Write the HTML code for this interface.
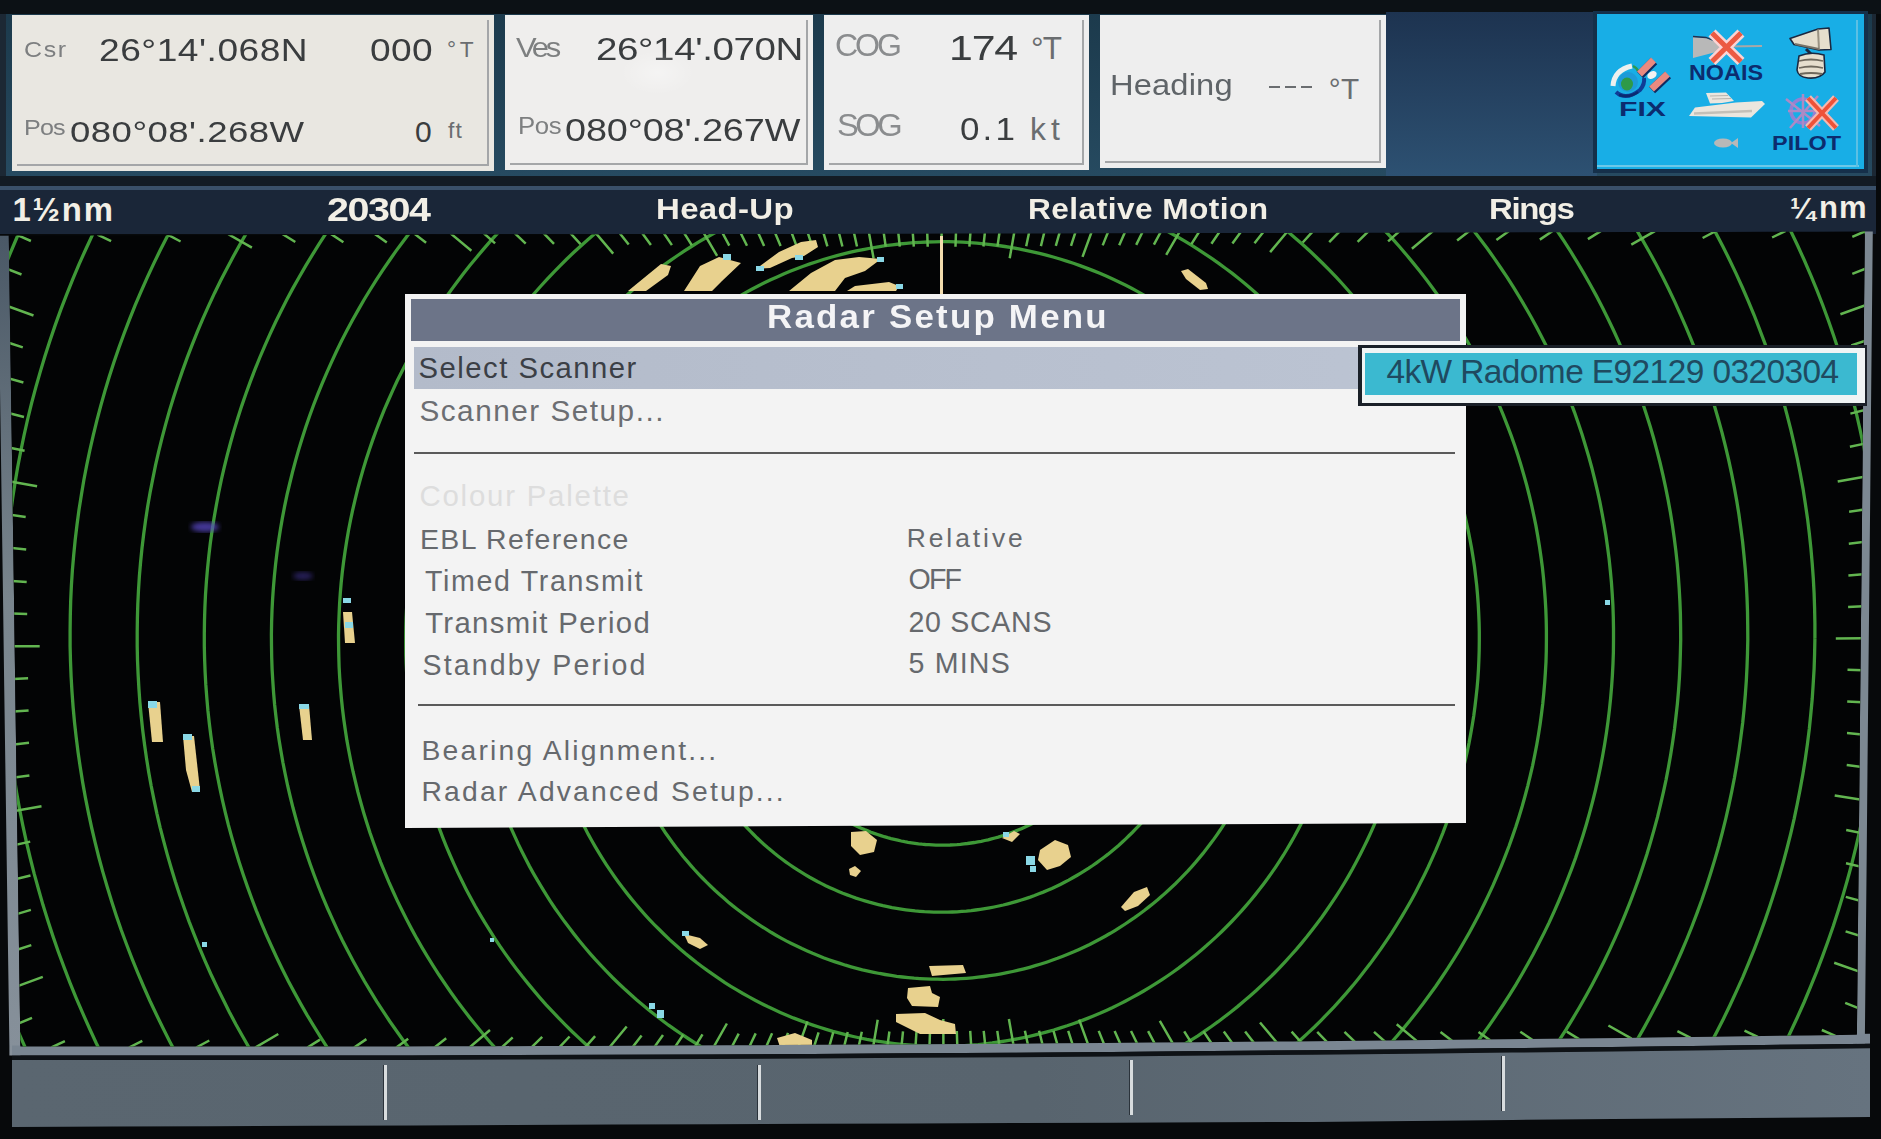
<!DOCTYPE html>
<html><head><meta charset="utf-8"><style>
html,body{margin:0;padding:0;width:1881px;height:1139px;overflow:hidden;background:#07090b;}
.abs{position:absolute;}
.t{position:absolute;white-space:pre;line-height:1;font-family:"Liberation Sans",sans-serif;}
.box{position:absolute;}
.box i{position:absolute;left:5px;top:5px;right:5px;bottom:5px;border-right:2px solid #a4a6a8;border-bottom:2px solid #a4a6a8;}
</style></head><body>
<div class="abs" style="left:0;top:0;width:1876px;height:186px;background:#1c2834"></div>
<div class="abs" style="left:0;top:0;width:1881px;height:14px;background:#0c1115"></div>
<div class="abs" style="left:6px;top:14px;width:1866px;height:162px;background:linear-gradient(#1c3a4c,#264a60)"></div>
<div class="abs" style="left:1386px;top:12px;width:211px;height:164px;background:linear-gradient(#1d3350,#2d5172)"></div>
<div class="abs" style="left:0;top:176px;width:1876px;height:10px;background:#131b23"></div>
<div class="box" style="left:12px;top:15px;width:482px;height:156px;background:#e9e7e1"><i></i></div>
<div class="box" style="left:505px;top:15px;width:308px;height:155px;background:#efeeed"><i></i></div>
<div class="box" style="left:824px;top:15px;width:265px;height:155px;background:#eeeeee"><i></i></div>
<div class="box" style="left:1100px;top:15px;width:286px;height:153px;background:#eeeeee"><i></i></div>
<div class="abs" style="left:1593px;top:11px;width:275px;height:162px;background:#15304a"></div>
<div class="abs" style="left:1597px;top:14px;width:267px;height:155px;background:#18aee6"></div>
<div class="abs" style="left:1597px;top:165px;width:262px;height:2px;background:#6cc8e8"></div><div class="abs" style="left:1856px;top:20px;width:2px;height:147px;background:#5cc0e4"></div>
<div class="abs" style="left:0;top:186px;width:1876px;height:48px;background:#1a2638"></div>
<div class="abs" style="left:0;top:186px;width:1876px;height:4px;background:#3a5068"></div>
<div class="abs" style="left:0;top:234px;width:1881px;height:905px;background:#07090b"></div>
<svg class="abs" style="left:0;top:0" width="1881" height="1139" viewBox="0 0 1881 1139">
<defs><linearGradient id="lbg" x1="0" x2="0" y1="0" y2="1"><stop offset="0" stop-color="#4a5866"/><stop offset="0.45" stop-color="#7a868e"/><stop offset="1" stop-color="#86909a"/></linearGradient></defs><polygon points="-2.2,235.7 -0.9,325.8 0.4,415.9 1.7,506.0 3.0,596.1 4.2,686.1 5.5,776.2 6.8,866.3 8.1,956.4 9.4,1046.5 9.4,1055.5 20.4,1055.5 20.4,1046.5 19.1,956.4 17.8,866.3 16.5,776.2 15.2,686.1 14.0,596.1 12.7,506.0 11.4,415.9 10.1,325.8 8.8,235.7" fill="url(#lbg)"/><polygon points="1864.8,231.6 1863.9,320.8 1863.0,410.1 1862.2,499.3 1861.3,588.6 1860.4,677.8 1859.5,767.1 1858.7,856.3 1857.8,945.6 1856.9,1034.8 1856.9,1043.8 1864.9,1043.8 1864.9,1034.8 1865.8,945.6 1866.7,856.3 1867.5,767.1 1868.4,677.8 1869.3,588.6 1870.2,499.3 1871.0,410.1 1871.9,320.8 1872.8,231.6" fill="#7c8892"/>
<defs><linearGradient id="bb" x1="0" x2="1" y1="0" y2="0"><stop offset="0" stop-color="#5a6670"/><stop offset="0.55" stop-color="#58646e"/><stop offset="1" stop-color="#66737f"/></linearGradient></defs><polygon points="12,1045.6 112,1045.6 212,1045.6 312,1045.5 412,1045.4 512,1045.1 612,1044.8 712,1044.4 812,1043.9 912,1043.3 1012,1042.7 1112,1041.9 1212,1041.1 1312,1040.2 1412,1039.2 1512,1038.1 1612,1037.0 1712,1035.7 1812,1034.4 1870,1033.7 1870,1043.7 1812,1044.4 1712,1045.7 1612,1047.0 1512,1048.1 1412,1049.2 1312,1050.2 1212,1051.1 1112,1051.9 1012,1052.7 912,1053.3 812,1053.9 712,1054.4 612,1054.8 512,1055.1 412,1055.4 312,1055.5 212,1055.6 112,1055.6 12,1055.6" fill="#7a8692"/><polygon points="12,1055.6 112,1055.6 212,1055.6 312,1055.5 412,1055.4 512,1055.1 612,1054.8 712,1054.4 812,1053.9 912,1053.3 1012,1052.7 1112,1051.9 1212,1051.1 1312,1050.2 1412,1049.2 1512,1048.1 1612,1047.0 1712,1045.7 1812,1044.4 1870,1043.7 1870,1048.2 1812,1048.9 1712,1050.2 1612,1051.5 1512,1052.6 1412,1053.7 1312,1054.7 1212,1055.6 1112,1056.4 1012,1057.2 912,1057.8 812,1058.4 712,1058.9 612,1059.3 512,1059.6 412,1059.9 312,1060.0 212,1060.1 112,1060.1 12,1060.1" fill="#0e1216"/><polygon points="12,1060.1 112,1060.1 212,1060.1 312,1060.0 412,1059.9 512,1059.6 612,1059.3 712,1058.9 812,1058.4 912,1057.8 1012,1057.2 1112,1056.4 1212,1055.6 1312,1054.7 1412,1053.7 1512,1052.6 1612,1051.5 1712,1050.2 1812,1048.9 1870,1048.2 1870,1117.0 1812,1117.5 1712,1118.3 1612,1119.1 1512,1119.9 1412,1120.9 1312,1121.9 1212,1122.3 1112,1122.7 1012,1123.1 912,1123.5 812,1123.8 712,1124.2 612,1124.6 512,1125.0 412,1125.4 312,1125.8 212,1126.2 112,1126.6 12,1127.0" fill="url(#bb)"/>
</svg>
<svg class="abs" style="left:0;top:0" width="1881" height="1139" viewBox="0 0 1881 1139"><defs><clipPath id="rc"><polygon points="8.8,235.7 56.4,235.6 104.0,235.5 151.6,235.4 199.2,235.3 246.7,235.2 294.3,235.1 341.9,235.0 389.5,234.9 437.1,234.8 484.7,234.6 532.3,234.5 579.9,234.4 627.5,234.3 675.1,234.2 722.6,234.1 770.2,234.0 817.8,233.9 865.4,233.8 913.0,233.7 960.6,233.6 1008.2,233.5 1055.8,233.4 1103.4,233.3 1151.0,233.2 1198.5,233.1 1246.1,233.0 1293.7,232.9 1341.3,232.8 1388.9,232.7 1436.5,232.5 1484.1,232.4 1531.7,232.3 1579.3,232.2 1626.9,232.1 1674.4,232.0 1722.0,231.9 1769.6,231.8 1817.2,231.7 1864.8,231.6 1864.8,231.6 1864.4,273.9 1864.0,316.1 1863.6,358.4 1863.1,400.7 1862.7,443.0 1862.3,485.2 1861.9,527.5 1861.5,569.8 1861.1,612.1 1860.6,654.3 1860.2,696.6 1859.8,738.9 1859.4,781.2 1859.0,823.4 1858.6,865.7 1858.1,908.0 1857.7,950.3 1857.3,992.5 1856.9,1034.8 1856.9,1034.8 1809.8,1035.4 1762.7,1036.1 1715.6,1036.7 1668.5,1037.3 1621.5,1037.9 1574.4,1038.4 1527.3,1039.0 1480.2,1039.5 1433.1,1040.0 1386.0,1040.5 1338.9,1040.9 1291.8,1041.4 1244.7,1041.8 1197.6,1042.2 1150.6,1042.6 1103.5,1043.0 1056.4,1043.3 1009.3,1043.7 962.2,1044.0 915.1,1044.3 868.0,1044.6 820.9,1044.8 773.8,1045.1 726.7,1045.3 679.7,1045.5 632.6,1045.7 585.5,1045.9 538.4,1046.0 491.3,1046.2 444.2,1046.3 397.1,1046.4 350.0,1046.5 302.9,1046.5 255.8,1046.6 208.8,1046.6 161.7,1046.6 114.6,1046.6 67.5,1046.5 20.4,1046.5 20.4,1046.5 19.8,1003.8 19.2,961.2 18.6,918.5 18.0,875.8 17.3,833.1 16.7,790.5 16.1,747.8 15.5,705.1 14.9,662.4 14.3,619.8 13.7,577.1 13.1,534.4 12.5,491.7 11.9,449.1 11.2,406.4 10.6,363.7 10.0,321.0 9.4,278.4 8.8,235.7"/></clipPath></defs><polygon points="8.8,235.7 56.4,235.6 104.0,235.5 151.6,235.4 199.2,235.3 246.7,235.2 294.3,235.1 341.9,235.0 389.5,234.9 437.1,234.8 484.7,234.6 532.3,234.5 579.9,234.4 627.5,234.3 675.1,234.2 722.6,234.1 770.2,234.0 817.8,233.9 865.4,233.8 913.0,233.7 960.6,233.6 1008.2,233.5 1055.8,233.4 1103.4,233.3 1151.0,233.2 1198.5,233.1 1246.1,233.0 1293.7,232.9 1341.3,232.8 1388.9,232.7 1436.5,232.5 1484.1,232.4 1531.7,232.3 1579.3,232.2 1626.9,232.1 1674.4,232.0 1722.0,231.9 1769.6,231.8 1817.2,231.7 1864.8,231.6 1864.8,231.6 1864.4,273.9 1864.0,316.1 1863.6,358.4 1863.1,400.7 1862.7,443.0 1862.3,485.2 1861.9,527.5 1861.5,569.8 1861.1,612.1 1860.6,654.3 1860.2,696.6 1859.8,738.9 1859.4,781.2 1859.0,823.4 1858.6,865.7 1858.1,908.0 1857.7,950.3 1857.3,992.5 1856.9,1034.8 1856.9,1034.8 1809.8,1035.4 1762.7,1036.1 1715.6,1036.7 1668.5,1037.3 1621.5,1037.9 1574.4,1038.4 1527.3,1039.0 1480.2,1039.5 1433.1,1040.0 1386.0,1040.5 1338.9,1040.9 1291.8,1041.4 1244.7,1041.8 1197.6,1042.2 1150.6,1042.6 1103.5,1043.0 1056.4,1043.3 1009.3,1043.7 962.2,1044.0 915.1,1044.3 868.0,1044.6 820.9,1044.8 773.8,1045.1 726.7,1045.3 679.7,1045.5 632.6,1045.7 585.5,1045.9 538.4,1046.0 491.3,1046.2 444.2,1046.3 397.1,1046.4 350.0,1046.5 302.9,1046.5 255.8,1046.6 208.8,1046.6 161.7,1046.6 114.6,1046.6 67.5,1046.5 20.4,1046.5 20.4,1046.5 19.8,1003.8 19.2,961.2 18.6,918.5 18.0,875.8 17.3,833.1 16.7,790.5 16.1,747.8 15.5,705.1 14.9,662.4 14.3,619.8 13.7,577.1 13.1,534.4 12.5,491.7 11.9,449.1 11.2,406.4 10.6,363.7 10.0,321.0 9.4,278.4 8.8,235.7" fill="#030405"/><g clip-path="url(#rc)" fill="none" stroke="#3e9837" stroke-width="3.3"><polyline points="1009.6,643.7 1009.6,644.9 1009.6,646.0 1009.5,647.2 1009.4,648.4 1009.4,649.5 1009.2,650.7 1009.1,651.9 1009.0,653.0 1008.8,654.2 1008.6,655.3 1008.4,656.5 1008.2,657.6 1007.9,658.8 1007.6,659.9 1007.3,661.1 1007.0,662.2 1006.7,663.3 1006.3,664.4 1006.0,665.5 1005.6,666.6 1005.2,667.7 1004.8,668.8 1004.3,669.9 1003.8,671.0 1003.4,672.1 1002.9,673.1 1002.3,674.2 1001.8,675.2 1001.2,676.2 1000.7,677.3 1000.1,678.3 999.5,679.3 998.8,680.3 998.2,681.2 997.5,682.2 996.8,683.2 996.2,684.1 995.4,685.0 994.7,686.0 994.0,686.9 993.2,687.8 992.4,688.6 991.6,689.5 990.8,690.4 990.0,691.2 989.2,692.0 988.3,692.8 987.5,693.6 986.6,694.4 985.7,695.2 984.8,695.9 983.9,696.6 983.0,697.4 982.0,698.1 981.1,698.7 980.1,699.4 979.1,700.1 978.2,700.7 977.2,701.3 976.2,701.9 975.1,702.5 974.1,703.1 973.1,703.6 972.0,704.1 971.0,704.6 969.9,705.1 968.8,705.6 967.8,706.1 966.7,706.5 965.6,706.9 964.5,707.3 963.4,707.7 962.2,708.0 961.1,708.4 960.0,708.7 958.9,709.0 957.7,709.3 956.6,709.5 955.4,709.8 954.3,710.0 953.1,710.2 952.0,710.4 950.8,710.5 949.7,710.7 948.5,710.8 947.3,710.9 946.2,710.9 945.0,711.0 943.8,711.0 942.6,711.1 941.5,711.0 940.3,711.0 939.1,711.0 938.0,710.9 936.8,710.8 935.6,710.7 934.5,710.6 933.3,710.4 932.2,710.3 931.0,710.1 929.9,709.9 928.7,709.7 927.6,709.4 926.4,709.1 925.3,708.8 924.2,708.5 923.0,708.2 921.9,707.9 920.8,707.5 919.7,707.1 918.6,706.7 917.5,706.3 916.4,705.8 915.4,705.4 914.3,704.9 913.2,704.4 912.2,703.9 911.2,703.3 910.1,702.8 909.1,702.2 908.1,701.6 907.1,701.0 906.1,700.4 905.1,699.8 904.2,699.1 903.2,698.4 902.3,697.7 901.3,697.0 900.4,696.3 899.5,695.6 898.6,694.8 897.7,694.0 896.9,693.2 896.0,692.4 895.2,691.6 894.4,690.8 893.6,689.9 892.8,689.1 892.0,688.2 891.2,687.3 890.5,686.4 889.7,685.5 889.0,684.6 888.3,683.7 887.6,682.7 887.0,681.7 886.3,680.8 885.7,679.8 885.1,678.8 884.5,677.8 883.9,676.8 883.3,675.7 882.8,674.7 882.3,673.7 881.8,672.6 881.3,671.5 880.8,670.5 880.4,669.4 879.9,668.3 879.5,667.2 879.1,666.1 878.7,665.0 878.4,663.9 878.1,662.8 877.7,661.6 877.4,660.5 877.2,659.4 876.9,658.2 876.7,657.1 876.5,655.9 876.3,654.8 876.1,653.6 875.9,652.5 875.8,651.3 875.7,650.1 875.6,649.0 875.5,647.8 875.4,646.6 875.4,645.5 875.4,644.3 875.4,643.1 875.4,641.9 875.5,640.8 875.5,639.6 875.6,638.4 875.7,637.3 875.9,636.1 876.0,634.9 876.2,633.8 876.4,632.6 876.6,631.5 876.8,630.3 877.1,629.2 877.3,628.0 877.6,626.9 877.9,625.8 878.3,624.7 878.6,623.5 879.0,622.4 879.4,621.3 879.8,620.2 880.2,619.1 880.7,618.1 881.1,617.0 881.6,615.9 882.1,614.9 882.6,613.8 883.2,612.8 883.7,611.7 884.3,610.7 884.9,609.7 885.5,608.7 886.1,607.7 886.8,606.7 887.4,605.8 888.1,604.8 888.8,603.9 889.5,602.9 890.2,602.0 891.0,601.1 891.7,600.2 892.5,599.3 893.3,598.5 894.1,597.6 894.9,596.8 895.7,596.0 896.6,595.1 897.5,594.3 898.3,593.6 899.2,592.8 900.1,592.1 901.0,591.3 902.0,590.6 902.9,589.9 903.9,589.2 904.8,588.6 905.8,587.9 906.8,587.3 907.8,586.7 908.8,586.1 909.8,585.5 910.8,584.9 911.9,584.4 912.9,583.9 914.0,583.3 915.0,582.9 916.1,582.4 917.2,581.9 918.3,581.5 919.4,581.1 920.5,580.7 921.6,580.3 922.7,580.0 923.8,579.6 925.0,579.3 926.1,579.0 927.2,578.7 928.4,578.5 929.5,578.2 930.7,578.0 931.8,577.8 933.0,577.6 934.2,577.5 935.3,577.3 936.5,577.2 937.7,577.1 938.8,577.1 940.0,577.0 941.2,577.0 942.4,576.9 943.5,577.0 944.7,577.0 945.9,577.0 947.0,577.1 948.2,577.2 949.4,577.3 950.5,577.4 951.7,577.6 952.9,577.7 954.0,577.9 955.2,578.1 956.3,578.4 957.5,578.6 958.6,578.9 959.7,579.2 960.9,579.5 962.0,579.8 963.1,580.1 964.2,580.5 965.3,580.9 966.4,581.3 967.5,581.7 968.6,582.2 969.7,582.6 970.7,583.1 971.8,583.6 972.9,584.1 973.9,584.7 974.9,585.2 975.9,585.8 977.0,586.4 978.0,587.0 978.9,587.6 979.9,588.3 980.9,588.9 981.9,589.6 982.8,590.3 983.7,591.0 984.6,591.7 985.5,592.5 986.4,593.2 987.3,594.0 988.2,594.8 989.0,595.6 989.9,596.4 990.7,597.2 991.5,598.1 992.3,598.9 993.1,599.8 993.8,600.7 994.6,601.6 995.3,602.5 996.0,603.4 996.7,604.4 997.4,605.3 998.1,606.3 998.7,607.2 999.4,608.2 1000.0,609.2 1000.6,610.2 1001.1,611.2 1001.7,612.3 1002.2,613.3 1002.8,614.3 1003.3,615.4 1003.8,616.5 1004.2,617.5 1004.7,618.6 1005.1,619.7 1005.5,620.8 1005.9,621.9 1006.3,623.0 1006.6,624.1 1007.0,625.2 1007.3,626.4 1007.6,627.5 1007.9,628.6 1008.1,629.8 1008.4,630.9 1008.6,632.1 1008.8,633.2 1008.9,634.4 1009.1,635.5 1009.2,636.7 1009.3,637.9 1009.4,639.0 1009.5,640.2 1009.6,641.4 1009.6,642.5 1009.6,643.7"/><polyline points="1076.7,643.4 1076.7,645.7 1076.6,648.1 1076.5,650.4 1076.4,652.7 1076.2,655.1 1076.0,657.4 1075.7,659.7 1075.4,662.0 1075.1,664.4 1074.7,666.7 1074.3,669.0 1073.8,671.3 1073.3,673.5 1072.7,675.8 1072.2,678.1 1071.5,680.3 1070.9,682.6 1070.2,684.8 1069.4,687.0 1068.6,689.3 1067.8,691.4 1067.0,693.6 1066.1,695.8 1065.1,697.9 1064.2,700.1 1063.2,702.2 1062.1,704.3 1061.0,706.4 1059.9,708.4 1058.8,710.5 1057.6,712.5 1056.4,714.5 1055.1,716.5 1053.8,718.4 1052.5,720.4 1051.1,722.3 1049.8,724.2 1048.3,726.0 1046.9,727.9 1045.4,729.7 1043.9,731.5 1042.3,733.2 1040.7,735.0 1039.1,736.7 1037.5,738.3 1035.8,740.0 1034.1,741.6 1032.4,743.2 1030.7,744.8 1028.9,746.3 1027.1,747.8 1025.2,749.3 1023.4,750.7 1021.5,752.1 1019.6,753.5 1017.7,754.8 1015.7,756.1 1013.8,757.4 1011.8,758.6 1009.8,759.8 1007.7,761.0 1005.7,762.1 1003.6,763.2 1001.5,764.2 999.4,765.3 997.3,766.2 995.1,767.2 993.0,768.1 990.8,769.0 988.6,769.8 986.4,770.6 984.2,771.3 982.0,772.0 979.7,772.7 977.5,773.4 975.2,774.0 972.9,774.5 970.6,775.0 968.4,775.5 966.1,775.9 963.8,776.3 961.4,776.7 959.1,777.0 956.8,777.3 954.5,777.5 952.1,777.7 949.8,777.9 947.5,778.0 945.1,778.1 942.8,778.1 940.5,778.1 938.1,778.0 935.8,778.0 933.5,777.8 931.1,777.7 928.8,777.4 926.5,777.2 924.1,776.9 921.8,776.6 919.5,776.2 917.2,775.8 914.9,775.3 912.7,774.8 910.4,774.3 908.1,773.7 905.9,773.1 903.6,772.4 901.4,771.7 899.2,771.0 897.0,770.2 894.8,769.4 892.6,768.6 890.4,767.7 888.3,766.8 886.1,765.8 884.0,764.8 881.9,763.8 879.9,762.7 877.8,761.6 875.8,760.5 873.7,759.3 871.7,758.1 869.8,756.8 867.8,755.5 865.9,754.2 864.0,752.9 862.1,751.5 860.2,750.1 858.4,748.6 856.6,747.1 854.8,745.6 853.0,744.1 851.3,742.5 849.6,740.9 847.9,739.3 846.3,737.6 844.7,735.9 843.1,734.2 841.5,732.4 840.0,730.7 838.5,728.9 837.0,727.0 835.6,725.2 834.2,723.3 832.8,721.4 831.5,719.5 830.2,717.5 828.9,715.6 827.7,713.6 826.5,711.6 825.4,709.5 824.2,707.5 823.1,705.4 822.1,703.3 821.1,701.2 820.1,699.1 819.2,696.9 818.3,694.8 817.4,692.6 816.6,690.4 815.8,688.2 815.0,686.0 814.3,683.8 813.6,681.5 813.0,679.3 812.4,677.0 811.8,674.7 811.3,672.4 810.9,670.1 810.4,667.8 810.0,665.5 809.7,663.2 809.4,660.9 809.1,658.6 808.8,656.2 808.7,653.9 808.5,651.6 808.4,649.2 808.3,646.9 808.3,644.5 808.3,642.2 808.4,639.9 808.4,637.5 808.6,635.2 808.8,632.8 809.0,630.5 809.2,628.2 809.5,625.9 809.9,623.5 810.2,621.2 810.7,618.9 811.1,616.6 811.6,614.3 812.2,612.1 812.7,609.8 813.3,607.5 814.0,605.3 814.7,603.1 815.4,600.8 816.2,598.6 817.0,596.4 817.9,594.2 818.8,592.1 819.7,589.9 820.6,587.8 821.7,585.7 822.7,583.6 823.8,581.5 824.9,579.4 826.0,577.4 827.2,575.4 828.4,573.4 829.7,571.4 831.0,569.4 832.3,567.5 833.6,565.6 835.0,563.7 836.4,561.8 837.9,560.0 839.4,558.2 840.9,556.4 842.4,554.6 844.0,552.9 845.6,551.2 847.3,549.5 848.9,547.9 850.6,546.3 852.4,544.7 854.1,543.1 855.9,541.6 857.7,540.1 859.5,538.6 861.4,537.2 863.3,535.8 865.2,534.4 867.1,533.1 869.0,531.8 871.0,530.5 873.0,529.3 875.0,528.1 877.1,526.9 879.1,525.8 881.2,524.7 883.3,523.7 885.4,522.7 887.6,521.7 889.7,520.7 891.9,519.8 894.0,519.0 896.2,518.1 898.5,517.4 900.7,516.6 902.9,515.9 905.2,515.2 907.4,514.6 909.7,514.0 912.0,513.4 914.3,512.9 916.6,512.5 918.9,512.0 921.2,511.6 923.5,511.3 925.8,511.0 928.2,510.7 930.5,510.4 932.8,510.3 935.2,510.1 937.5,510.0 939.9,509.9 942.2,509.9 944.5,509.9 946.9,510.0 949.2,510.1 951.6,510.2 953.9,510.4 956.3,510.6 958.6,510.8 960.9,511.1 963.2,511.5 965.6,511.8 967.9,512.3 970.2,512.7 972.5,513.2 974.7,513.8 977.0,514.3 979.3,515.0 981.5,515.6 983.8,516.3 986.0,517.0 988.2,517.8 990.4,518.6 992.6,519.5 994.7,520.4 996.9,521.3 999.0,522.2 1001.2,523.2 1003.3,524.3 1005.3,525.4 1007.4,526.5 1009.4,527.6 1011.5,528.8 1013.5,530.0 1015.5,531.2 1017.4,532.5 1019.3,533.8 1021.3,535.2 1023.1,536.6 1025.0,538.0 1026.8,539.4 1028.7,540.9 1030.4,542.4 1032.2,544.0 1033.9,545.6 1035.6,547.2 1037.3,548.8 1039.0,550.5 1040.6,552.1 1042.2,553.9 1043.7,555.6 1045.2,557.4 1046.7,559.2 1048.2,561.0 1049.6,562.9 1051.0,564.7 1052.4,566.6 1053.7,568.6 1055.0,570.5 1056.3,572.5 1057.5,574.5 1058.7,576.5 1059.8,578.5 1061.0,580.5 1062.0,582.6 1063.1,584.7 1064.1,586.8 1065.1,588.9 1066.0,591.1 1066.9,593.2 1067.8,595.4 1068.6,597.6 1069.4,599.8 1070.1,602.0 1070.8,604.2 1071.5,606.5 1072.1,608.7 1072.7,611.0 1073.3,613.3 1073.8,615.5 1074.2,617.8 1074.7,620.1 1075.0,622.4 1075.4,624.7 1075.7,627.1 1076.0,629.4 1076.2,631.7 1076.4,634.0 1076.5,636.4 1076.6,638.7 1076.7,641.0 1076.7,643.4"/><polyline points="1143.8,643.0 1143.8,646.6 1143.7,650.1 1143.5,653.6 1143.3,657.1 1143.0,660.6 1142.7,664.1 1142.3,667.5 1141.8,671.0 1141.3,674.5 1140.7,677.9 1140.1,681.4 1139.4,684.8 1138.6,688.3 1137.8,691.7 1136.9,695.1 1136.0,698.5 1135.0,701.8 1133.9,705.2 1132.8,708.5 1131.7,711.8 1130.4,715.1 1129.1,718.4 1127.8,721.6 1126.4,724.9 1124.9,728.1 1123.4,731.2 1121.9,734.4 1120.2,737.5 1118.6,740.6 1116.8,743.7 1115.1,746.7 1113.2,749.7 1111.3,752.7 1109.4,755.6 1107.4,758.5 1105.4,761.4 1103.3,764.2 1101.2,767.0 1099.0,769.7 1096.7,772.5 1094.5,775.1 1092.1,777.8 1089.8,780.4 1087.4,782.9 1084.9,785.5 1082.4,787.9 1079.9,790.4 1077.3,792.8 1074.6,795.1 1072.0,797.4 1069.3,799.6 1066.5,801.8 1063.8,804.0 1060.9,806.1 1058.1,808.1 1055.2,810.1 1052.3,812.1 1049.3,814.0 1046.3,815.9 1043.3,817.7 1040.3,819.4 1037.2,821.1 1034.1,822.7 1030.9,824.3 1027.8,825.8 1024.6,827.3 1021.4,828.7 1018.1,830.1 1014.9,831.4 1011.6,832.6 1008.3,833.8 1005.0,835.0 1001.6,836.0 998.3,837.1 994.9,838.0 991.5,838.9 988.1,839.8 984.7,840.5 981.3,841.3 977.8,841.9 974.4,842.5 970.9,843.0 967.4,843.5 963.9,843.9 960.4,844.3 957.0,844.6 953.5,844.8 950.0,845.0 946.5,845.1 942.9,845.2 939.4,845.1 935.9,845.1 932.4,844.9 928.9,844.7 925.4,844.5 922.0,844.2 918.5,843.8 915.0,843.3 911.5,842.8 908.1,842.3 904.6,841.7 901.2,841.0 897.8,840.2 894.4,839.4 891.0,838.6 887.6,837.7 884.2,836.7 880.9,835.6 877.5,834.5 874.2,833.4 870.9,832.2 867.7,830.9 864.4,829.6 861.2,828.2 858.0,826.7 854.9,825.2 851.7,823.7 848.6,822.1 845.5,820.4 842.5,818.7 839.4,816.9 836.4,815.1 833.5,813.2 830.5,811.3 827.6,809.3 824.8,807.3 822.0,805.2 819.2,803.1 816.4,800.9 813.7,798.7 811.0,796.4 808.4,794.1 805.8,791.8 803.2,789.4 800.7,786.9 798.3,784.4 795.8,781.9 793.5,779.3 791.1,776.7 788.8,774.0 786.6,771.3 784.4,768.6 782.2,765.8 780.1,763.0 778.1,760.1 776.1,757.2 774.1,754.3 772.3,751.4 770.4,748.4 768.6,745.3 766.9,742.3 765.2,739.2 763.5,736.1 762.0,733.0 760.4,729.8 759.0,726.6 757.6,723.4 756.2,720.1 754.9,716.9 753.6,713.6 752.5,710.3 751.3,707.0 750.3,703.6 749.2,700.3 748.3,696.9 747.4,693.5 746.6,690.1 745.8,686.6 745.1,683.2 744.4,679.7 743.8,676.3 743.3,672.8 742.8,669.3 742.4,665.8 742.0,662.3 741.7,658.8 741.5,655.3 741.3,651.8 741.2,648.3 741.2,644.8 741.2,641.3 741.3,637.8 741.4,634.2 741.6,630.7 741.9,627.2 742.2,623.7 742.6,620.2 743.0,616.8 743.5,613.3 744.1,609.8 744.7,606.4 745.4,602.9 746.1,599.5 746.9,596.1 747.8,592.7 748.7,589.3 749.7,585.9 750.7,582.5 751.8,579.2 753.0,575.9 754.2,572.6 755.5,569.3 756.8,566.1 758.2,562.8 759.7,559.6 761.2,556.5 762.7,553.3 764.3,550.2 766.0,547.1 767.7,544.0 769.5,541.0 771.3,538.0 773.2,535.0 775.1,532.1 777.1,529.2 779.1,526.3 781.2,523.5 783.3,520.7 785.5,517.9 787.7,515.2 790.0,512.6 792.3,509.9 794.7,507.3 797.1,504.8 799.6,502.2 802.1,499.8 804.6,497.3 807.2,495.0 809.8,492.6 812.5,490.3 815.2,488.1 818.0,485.9 820.7,483.8 823.6,481.7 826.4,479.6 829.3,477.6 832.2,475.7 835.2,473.8 838.2,471.9 841.2,470.1 844.3,468.4 847.4,466.7 850.5,465.1 853.6,463.5 856.8,462.0 860.0,460.5 863.2,459.1 866.5,457.7 869.8,456.4 873.1,455.2 876.4,454.0 879.7,452.9 883.1,451.8 886.4,450.8 889.8,449.9 893.2,449.0 896.7,448.1 900.1,447.4 903.6,446.7 907.0,446.0 910.5,445.4 914.0,444.9 917.5,444.4 921.0,444.0 924.5,443.7 928.0,443.4 931.5,443.2 935.0,443.0 938.5,442.9 942.1,442.8 945.6,442.9 949.1,442.9 952.6,443.1 956.1,443.3 959.6,443.5 963.2,443.9 966.7,444.3 970.1,444.7 973.6,445.2 977.1,445.8 980.6,446.4 984.0,447.1 987.5,447.8 990.9,448.7 994.3,449.5 997.7,450.4 1001.1,451.4 1004.4,452.5 1007.8,453.6 1011.1,454.7 1014.4,456.0 1017.7,457.2 1020.9,458.6 1024.2,459.9 1027.4,461.4 1030.6,462.9 1033.7,464.4 1036.8,466.1 1039.9,467.7 1043.0,469.4 1046.0,471.2 1049.0,473.0 1052.0,474.9 1054.9,476.8 1057.9,478.8 1060.7,480.8 1063.6,482.9 1066.3,485.0 1069.1,487.2 1071.8,489.4 1074.5,491.7 1077.1,494.0 1079.7,496.4 1082.3,498.8 1084.8,501.2 1087.3,503.7 1089.7,506.2 1092.1,508.8 1094.4,511.4 1096.7,514.1 1098.9,516.8 1101.1,519.5 1103.3,522.3 1105.4,525.1 1107.4,528.0 1109.4,530.8 1111.3,533.8 1113.2,536.7 1115.1,539.7 1116.8,542.7 1118.6,545.8 1120.3,548.8 1121.9,551.9 1123.5,555.1 1125.0,558.2 1126.4,561.4 1127.8,564.6 1129.2,567.9 1130.5,571.1 1131.7,574.4 1132.9,577.7 1134.0,581.0 1135.0,584.3 1136.0,587.7 1137.0,591.1 1137.8,594.5 1138.7,597.9 1139.4,601.3 1140.1,604.7 1140.8,608.2 1141.3,611.6 1141.9,615.1 1142.3,618.6 1142.7,622.0 1143.1,625.5 1143.3,629.0 1143.5,632.5 1143.7,636.0 1143.8,639.5 1143.8,643.0"/><polyline points="1210.9,642.7 1210.9,647.4 1210.7,652.0 1210.5,656.7 1210.2,661.4 1209.9,666.0 1209.4,670.7 1208.9,675.3 1208.3,680.0 1207.6,684.6 1206.8,689.2 1205.9,693.8 1205.0,698.4 1204.0,703.0 1202.9,707.5 1201.7,712.0 1200.4,716.6 1199.1,721.0 1197.7,725.5 1196.2,729.9 1194.6,734.4 1193.0,738.7 1191.3,743.1 1189.5,747.4 1187.6,751.7 1185.7,756.0 1183.6,760.2 1181.6,764.4 1179.4,768.6 1177.2,772.7 1174.8,776.8 1172.5,780.8 1170.0,784.8 1167.5,788.8 1164.9,792.7 1162.3,796.6 1159.6,800.4 1156.8,804.2 1153.9,807.9 1151.0,811.6 1148.0,815.2 1145.0,818.8 1141.9,822.3 1138.7,825.8 1135.5,829.2 1132.3,832.5 1128.9,835.8 1125.5,839.1 1122.1,842.3 1118.6,845.4 1115.0,848.4 1111.4,851.4 1107.8,854.4 1104.1,857.2 1100.3,860.0 1096.5,862.8 1092.7,865.5 1088.8,868.1 1084.8,870.6 1080.8,873.1 1076.8,875.5 1072.8,877.8 1068.7,880.1 1064.5,882.3 1060.3,884.4 1056.1,886.4 1051.9,888.4 1047.6,890.3 1043.3,892.1 1038.9,893.8 1034.6,895.5 1030.2,897.1 1025.7,898.6 1021.3,900.0 1016.8,901.4 1012.3,902.7 1007.8,903.9 1003.3,905.0 998.7,906.0 994.1,907.0 989.5,907.9 984.9,908.7 980.3,909.4 975.7,910.0 971.1,910.6 966.4,911.1 961.8,911.4 957.1,911.8 952.4,912.0 947.8,912.1 943.1,912.2 938.4,912.2 933.8,912.1 929.1,911.9 924.4,911.7 919.8,911.3 915.1,910.9 910.5,910.4 905.9,909.8 901.2,909.1 896.6,908.4 892.0,907.6 887.5,906.7 882.9,905.7 878.4,904.6 873.8,903.4 869.3,902.2 864.9,900.9 860.4,899.5 856.0,898.1 851.6,896.5 847.2,894.9 842.8,893.2 838.5,891.4 834.2,889.6 830.0,887.7 825.7,885.7 821.6,883.6 817.4,881.5 813.3,879.2 809.2,877.0 805.2,874.6 801.2,872.2 797.2,869.7 793.3,867.1 789.5,864.5 785.7,861.8 781.9,859.0 778.2,856.2 774.5,853.3 770.9,850.3 767.3,847.3 763.8,844.2 760.3,841.0 756.9,837.8 753.6,834.5 750.3,831.2 747.1,827.8 743.9,824.4 740.8,820.9 737.7,817.3 734.7,813.7 731.8,810.1 728.9,806.4 726.1,802.6 723.4,798.8 720.7,795.0 718.1,791.1 715.6,787.1 713.1,783.1 710.7,779.1 708.4,775.1 706.2,770.9 704.0,766.8 701.9,762.6 699.8,758.4 697.9,754.1 696.0,749.8 694.2,745.5 692.4,741.2 690.8,736.8 689.2,732.4 687.7,727.9 686.2,723.5 684.9,719.0 683.6,714.5 682.4,709.9 681.3,705.4 680.3,700.8 679.3,696.2 678.4,691.6 677.6,687.0 676.9,682.4 676.3,677.7 675.7,673.1 675.2,668.4 674.8,663.7 674.5,659.1 674.3,654.4 674.1,649.7 674.1,645.0 674.1,640.3 674.2,635.6 674.4,631.0 674.6,626.3 675.0,621.6 675.4,616.9 675.9,612.3 676.5,607.6 677.1,603.0 677.9,598.4 678.7,593.8 679.6,589.2 680.6,584.6 681.7,580.0 682.8,575.5 684.1,571.0 685.4,566.5 686.8,562.0 688.2,557.6 689.8,553.1 691.4,548.7 693.1,544.4 694.8,540.0 696.7,535.7 698.6,531.5 700.6,527.2 702.7,523.0 704.8,518.9 707.0,514.7 709.3,510.7 711.7,506.6 714.1,502.6 716.6,498.7 719.2,494.7 721.8,490.9 724.5,487.1 727.3,483.3 730.2,479.6 733.1,475.9 736.0,472.3 739.1,468.7 742.2,465.2 745.3,461.7 748.5,458.3 751.8,454.9 755.1,451.6 758.5,448.4 762.0,445.2 765.5,442.1 769.0,439.1 772.7,436.1 776.3,433.2 780.0,430.3 783.8,427.5 787.6,424.8 791.5,422.1 795.4,419.5 799.3,417.0 803.3,414.5 807.4,412.1 811.4,409.8 815.6,407.6 819.7,405.4 823.9,403.3 828.2,401.3 832.4,399.3 836.7,397.4 841.1,395.6 845.4,393.9 849.8,392.2 854.3,390.7 858.7,389.2 863.2,387.7 867.7,386.4 872.2,385.1 876.8,383.9 881.3,382.8 885.9,381.8 890.5,380.9 895.1,380.0 899.8,379.2 904.4,378.5 909.1,377.9 913.8,377.3 918.4,376.9 923.1,376.5 927.8,376.2 932.5,376.0 937.2,375.8 941.9,375.8 946.6,375.8 951.3,375.9 956.0,376.1 960.7,376.4 965.4,376.7 970.1,377.2 974.7,377.7 979.4,378.3 984.0,379.0 988.7,379.7 993.3,380.6 997.9,381.5 1002.5,382.5 1007.1,383.6 1011.6,384.7 1016.2,386.0 1020.7,387.3 1025.2,388.7 1029.6,390.1 1034.0,391.7 1038.5,393.3 1042.8,395.0 1047.2,396.8 1051.5,398.6 1055.8,400.6 1060.0,402.6 1064.2,404.6 1068.4,406.8 1072.5,409.0 1076.6,411.3 1080.6,413.6 1084.7,416.1 1088.6,418.6 1092.5,421.1 1096.4,423.8 1100.2,426.5 1104.0,429.3 1107.7,432.1 1111.4,435.0 1115.0,437.9 1118.6,441.0 1122.1,444.1 1125.6,447.2 1129.0,450.4 1132.3,453.7 1135.6,457.0 1138.9,460.4 1142.0,463.8 1145.2,467.3 1148.2,470.8 1151.2,474.4 1154.1,478.1 1157.0,481.8 1159.8,485.5 1162.5,489.3 1165.1,493.2 1167.7,497.0 1170.2,501.0 1172.7,505.0 1175.1,509.0 1177.4,513.0 1179.6,517.1 1181.8,521.3 1183.9,525.4 1185.9,529.6 1187.8,533.9 1189.7,538.2 1191.5,542.5 1193.2,546.8 1194.8,551.2 1196.4,555.6 1197.9,560.0 1199.3,564.5 1200.6,568.9 1201.9,573.4 1203.0,578.0 1204.1,582.5 1205.1,587.1 1206.0,591.6 1206.9,596.2 1207.7,600.8 1208.4,605.4 1209.0,610.1 1209.5,614.7 1209.9,619.4 1210.3,624.0 1210.6,628.7 1210.8,633.3 1210.9,638.0 1210.9,642.7"/><polyline points="1278.0,642.3 1278.0,648.2 1277.8,654.0 1277.5,659.8 1277.2,665.7 1276.7,671.5 1276.1,677.3 1275.4,683.1 1274.7,688.9 1273.8,694.7 1272.8,700.4 1271.7,706.2 1270.5,711.9 1269.3,717.6 1267.9,723.3 1266.4,729.0 1264.8,734.6 1263.2,740.2 1261.4,745.8 1259.5,751.3 1257.6,756.9 1255.5,762.3 1253.4,767.8 1251.1,773.2 1248.8,778.6 1246.3,783.9 1243.8,789.2 1241.2,794.4 1238.5,799.6 1235.7,804.8 1232.8,809.9 1229.8,814.9 1226.8,819.9 1223.6,824.9 1220.4,829.8 1217.1,834.6 1213.7,839.4 1210.2,844.1 1206.6,848.8 1203.0,853.4 1199.3,857.9 1195.5,862.4 1191.6,866.8 1187.7,871.1 1183.6,875.4 1179.5,879.6 1175.4,883.7 1171.1,887.7 1166.8,891.7 1162.5,895.6 1158.0,899.5 1153.5,903.2 1148.9,906.9 1144.3,910.5 1139.6,914.0 1134.9,917.4 1130.1,920.7 1125.2,924.0 1120.3,927.2 1115.3,930.3 1110.3,933.3 1105.2,936.2 1100.1,939.0 1094.9,941.7 1089.7,944.4 1084.4,946.9 1079.1,949.4 1073.8,951.8 1068.4,954.0 1062.9,956.2 1057.5,958.3 1052.0,960.3 1046.5,962.2 1040.9,964.0 1035.3,965.7 1029.7,967.3 1024.0,968.8 1018.4,970.2 1012.7,971.5 1007.0,972.7 1001.2,973.8 995.5,974.8 989.7,975.7 984.0,976.5 978.2,977.2 972.4,977.8 966.5,978.3 960.7,978.7 954.9,979.0 949.1,979.2 943.2,979.3 937.4,979.2 931.6,979.1 925.8,978.9 919.9,978.6 914.1,978.2 908.3,977.6 902.5,977.0 896.7,976.3 891.0,975.4 885.2,974.5 879.5,973.5 873.8,972.3 868.1,971.1 862.4,969.8 856.7,968.3 851.1,966.8 845.5,965.2 840.0,963.4 834.4,961.6 828.9,959.7 823.4,957.7 818.0,955.5 812.6,953.3 807.3,951.0 801.9,948.6 796.7,946.1 791.4,943.5 786.2,940.9 781.1,938.1 776.0,935.2 771.0,932.3 766.0,929.2 761.1,926.1 756.2,922.9 751.4,919.6 746.6,916.2 741.9,912.8 737.2,909.2 732.6,905.6 728.1,901.9 723.7,898.1 719.3,894.2 714.9,890.3 710.7,886.3 706.5,882.2 702.4,878.0 698.4,873.8 694.4,869.5 690.5,865.1 686.7,860.7 682.9,856.2 679.3,851.6 675.7,847.0 672.2,842.3 668.8,837.5 665.4,832.7 662.2,827.8 659.0,822.9 655.9,817.9 652.9,812.9 650.0,807.8 647.2,802.7 644.5,797.5 641.8,792.2 639.3,787.0 636.8,781.6 634.5,776.3 632.2,770.9 630.0,765.4 627.9,760.0 626.0,754.4 624.1,748.9 622.3,743.3 620.6,737.7 619.0,732.1 617.5,726.4 616.1,720.7 614.8,715.0 613.6,709.2 612.5,703.5 611.5,697.7 610.5,691.9 609.7,686.1 609.0,680.3 608.4,674.5 607.9,668.6 607.6,662.8 607.3,656.9 607.1,651.1 607.0,645.2 607.0,639.4 607.1,633.5 607.3,627.6 607.6,621.8 608.1,616.0 608.6,610.1 609.2,604.3 609.9,598.5 610.8,592.7 611.7,586.9 612.7,581.2 613.9,575.4 615.1,569.7 616.4,564.0 617.9,558.3 619.4,552.7 621.0,547.0 622.7,541.5 624.6,535.9 626.5,530.4 628.5,524.9 630.6,519.4 632.8,514.0 635.1,508.6 637.5,503.3 640.0,498.0 642.6,492.7 645.3,487.5 648.1,482.4 650.9,477.3 653.9,472.2 656.9,467.2 660.0,462.3 663.2,457.4 666.5,452.5 669.9,447.8 673.4,443.0 676.9,438.4 680.6,433.8 684.3,429.3 688.1,424.8 691.9,420.4 695.9,416.1 699.9,411.8 704.0,407.6 708.2,403.5 712.4,399.5 716.7,395.5 721.1,391.6 725.5,387.8 730.1,384.0 734.6,380.4 739.3,376.8 744.0,373.3 748.8,369.9 753.6,366.6 758.5,363.3 763.4,360.2 768.4,357.1 773.5,354.1 778.6,351.2 783.7,348.4 788.9,345.7 794.2,343.1 799.5,340.5 804.8,338.1 810.2,335.7 815.6,333.5 821.1,331.3 826.6,329.3 832.1,327.3 837.7,325.4 843.3,323.6 848.9,322.0 854.6,320.4 860.3,318.9 866.0,317.5 871.7,316.2 877.5,315.1 883.3,314.0 889.1,313.0 894.9,312.1 900.7,311.3 906.5,310.7 912.4,310.1 918.3,309.6 924.1,309.2 930.0,309.0 935.9,308.8 941.8,308.7 947.6,308.8 953.5,308.9 959.4,309.2 965.3,309.5 971.1,309.9 977.0,310.5 982.8,311.1 988.7,311.9 994.5,312.7 1000.3,313.7 1006.1,314.7 1011.8,315.9 1017.6,317.1 1023.3,318.5 1029.0,319.9 1034.7,321.5 1040.3,323.1 1045.9,324.9 1051.5,326.7 1057.0,328.6 1062.5,330.7 1068.0,332.8 1073.4,335.0 1078.8,337.3 1084.2,339.7 1089.5,342.2 1094.8,344.8 1100.0,347.5 1105.1,350.3 1110.3,353.2 1115.3,356.1 1120.3,359.2 1125.3,362.3 1130.2,365.5 1135.0,368.8 1139.8,372.2 1144.5,375.6 1149.2,379.2 1153.8,382.8 1158.3,386.5 1162.8,390.3 1167.2,394.1 1171.5,398.1 1175.8,402.1 1180.0,406.1 1184.1,410.3 1188.1,414.5 1192.1,418.8 1196.0,423.2 1199.8,427.6 1203.5,432.1 1207.1,436.7 1210.7,441.3 1214.2,446.0 1217.6,450.7 1220.9,455.5 1224.2,460.4 1227.3,465.3 1230.4,470.2 1233.3,475.3 1236.2,480.3 1239.0,485.4 1241.7,490.6 1244.3,495.8 1246.8,501.1 1249.3,506.4 1251.6,511.7 1253.8,517.1 1256.0,522.5 1258.0,528.0 1260.0,533.5 1261.8,539.0 1263.6,544.6 1265.2,550.2 1266.8,555.8 1268.2,561.4 1269.6,567.1 1270.8,572.8 1272.0,578.5 1273.0,584.3 1274.0,590.0 1274.9,595.8 1275.6,601.6 1276.3,607.4 1276.8,613.2 1277.3,619.0 1277.6,624.8 1277.8,630.6 1278.0,636.5 1278.0,642.3"/><polyline points="1345.1,641.9 1345.0,648.9 1344.8,655.9 1344.5,662.9 1344.1,669.9 1343.5,676.9 1342.8,683.9 1342.0,690.8 1341.0,697.8 1340.0,704.7 1338.8,711.6 1337.5,718.5 1336.1,725.4 1334.5,732.2 1332.9,739.1 1331.1,745.8 1329.2,752.6 1327.2,759.3 1325.1,766.0 1322.8,772.7 1320.5,779.3 1318.0,785.9 1315.4,792.4 1312.7,798.9 1309.9,805.3 1307.0,811.7 1303.9,818.1 1300.8,824.4 1297.5,830.6 1294.2,836.8 1290.7,842.9 1287.1,849.0 1283.5,855.0 1279.7,860.9 1275.8,866.8 1271.8,872.6 1267.8,878.3 1263.6,884.0 1259.3,889.6 1254.9,895.1 1250.5,900.5 1245.9,905.9 1241.3,911.2 1236.5,916.4 1231.7,921.5 1226.8,926.5 1221.8,931.5 1216.7,936.4 1211.5,941.1 1206.3,945.8 1200.9,950.4 1195.5,954.9 1190.1,959.3 1184.5,963.6 1178.9,967.9 1173.2,972.0 1167.4,976.0 1161.6,979.9 1155.7,983.7 1149.7,987.4 1143.7,991.0 1137.6,994.5 1131.4,997.9 1125.2,1001.2 1119.0,1004.4 1112.7,1007.5 1106.3,1010.4 1099.9,1013.3 1093.4,1016.0 1086.9,1018.6 1080.4,1021.1 1073.8,1023.5 1067.1,1025.8 1060.5,1027.9 1053.8,1030.0 1047.0,1031.9 1040.3,1033.7 1033.5,1035.4 1026.7,1037.0 1019.8,1038.4 1012.9,1039.7 1006.0,1040.9 999.1,1042.0 992.2,1043.0 985.3,1043.8 978.3,1044.6 971.3,1045.1 964.4,1045.6 957.4,1046.0 950.4,1046.2 943.4,1046.3 936.4,1046.3 929.4,1046.2 922.4,1045.9 915.5,1045.5 908.5,1045.0 901.5,1044.4 894.6,1043.6 887.6,1042.7 880.7,1041.7 873.8,1040.6 866.9,1039.4 860.1,1038.0 853.3,1036.5 846.5,1034.9 839.7,1033.2 832.9,1031.4 826.2,1029.4 819.6,1027.3 812.9,1025.1 806.3,1022.8 799.8,1020.4 793.2,1017.9 786.8,1015.2 780.3,1012.4 774.0,1009.6 767.6,1006.6 761.4,1003.5 755.1,1000.2 749.0,996.9 742.9,993.5 736.8,989.9 730.8,986.3 724.9,982.6 719.1,978.7 713.3,974.7 707.6,970.7 701.9,966.5 696.3,962.3 690.8,957.9 685.4,953.5 680.1,948.9 674.8,944.3 669.6,939.6 664.5,934.7 659.5,929.8 654.5,924.8 649.7,919.8 644.9,914.6 640.3,909.4 635.7,904.0 631.2,898.6 626.8,893.1 622.5,887.6 618.3,881.9 614.2,876.2 610.2,870.4 606.3,864.6 602.5,858.7 598.8,852.7 595.2,846.6 591.7,840.5 588.3,834.4 585.0,828.1 581.8,821.9 578.8,815.5 575.8,809.1 573.0,802.7 570.3,796.2 567.6,789.7 565.1,783.1 562.7,776.5 560.5,769.8 558.3,763.1 556.3,756.4 554.4,749.6 552.5,742.8 550.9,736.0 549.3,729.1 547.8,722.2 546.5,715.3 545.3,708.4 544.2,701.5 543.2,694.5 542.4,687.5 541.7,680.5 541.1,673.5 540.6,666.5 540.2,659.5 540.0,652.4 539.9,645.4 539.9,638.4 540.0,631.3 540.3,624.3 540.6,617.3 541.1,610.3 541.8,603.3 542.5,596.3 543.4,589.3 544.4,582.4 545.5,575.4 546.7,568.5 548.1,561.6 549.5,554.8 551.1,547.9 552.8,541.1 554.7,534.3 556.6,527.6 558.7,520.9 560.9,514.2 563.2,507.6 565.6,501.0 568.1,494.4 570.8,487.9 573.5,481.5 576.4,475.1 579.4,468.7 582.5,462.4 585.7,456.2 589.0,450.0 592.5,443.9 596.0,437.8 599.6,431.8 603.4,425.9 607.2,420.0 611.2,414.2 615.2,408.4 619.4,402.8 623.7,397.2 628.0,391.7 632.5,386.2 637.0,380.9 641.6,375.6 646.4,370.4 651.2,365.3 656.1,360.3 661.1,355.3 666.2,350.5 671.4,345.7 676.6,341.1 682.0,336.5 687.4,332.0 692.9,327.6 698.5,323.3 704.1,319.1 709.8,315.0 715.6,311.0 721.5,307.1 727.4,303.4 733.4,299.7 739.5,296.1 745.6,292.6 751.8,289.2 758.1,286.0 764.4,282.8 770.7,279.8 777.1,276.9 783.6,274.0 790.1,271.3 796.7,268.7 803.3,266.3 809.9,263.9 816.6,261.7 823.3,259.5 830.1,257.5 836.9,255.6 843.7,253.9 850.6,252.2 857.5,250.7 864.4,249.3 871.3,248.0 878.3,246.8 885.3,245.7 892.3,244.8 899.3,244.0 906.3,243.3 913.4,242.7 920.4,242.3 927.5,242.0 934.5,241.8 941.6,241.7 948.7,241.7 955.7,241.9 962.8,242.2 969.8,242.6 976.9,243.1 983.9,243.8 990.9,244.6 997.9,245.5 1004.9,246.5 1011.9,247.6 1018.8,248.9 1025.8,250.3 1032.7,251.8 1039.5,253.4 1046.4,255.1 1053.2,257.0 1060.0,259.0 1066.7,261.1 1073.4,263.3 1080.0,265.6 1086.7,268.1 1093.2,270.6 1099.8,273.3 1106.2,276.1 1112.7,279.0 1119.0,282.0 1125.3,285.1 1131.6,288.3 1137.8,291.6 1144.0,295.1 1150.0,298.6 1156.1,302.3 1162.0,306.0 1167.9,309.9 1173.7,313.8 1179.4,317.9 1185.1,322.0 1190.7,326.3 1196.2,330.6 1201.7,335.1 1207.0,339.6 1212.3,344.2 1217.5,348.9 1222.6,353.8 1227.6,358.7 1232.6,363.6 1237.4,368.7 1242.2,373.9 1246.8,379.1 1251.4,384.4 1255.9,389.8 1260.2,395.3 1264.5,400.8 1268.7,406.4 1272.8,412.1 1276.8,417.9 1280.6,423.7 1284.4,429.6 1288.1,435.5 1291.7,441.6 1295.1,447.6 1298.5,453.8 1301.7,460.0 1304.8,466.2 1307.8,472.6 1310.7,478.9 1313.5,485.3 1316.2,491.8 1318.8,498.3 1321.2,504.8 1323.6,511.4 1325.8,518.1 1327.9,524.7 1329.8,531.4 1331.7,538.2 1333.4,544.9 1335.1,551.7 1336.6,558.6 1338.0,565.4 1339.2,572.3 1340.4,579.2 1341.4,586.1 1342.3,593.0 1343.0,600.0 1343.7,607.0 1344.2,613.9 1344.6,620.9 1344.9,627.9 1345.1,634.9 1345.1,641.9"/><polyline points="1412.2,641.5 1412.1,649.7 1411.9,657.8 1411.5,666.0 1411.0,674.1 1410.3,682.3 1409.5,690.4 1408.5,698.5 1407.4,706.6 1406.2,714.7 1404.8,722.8 1403.3,730.8 1401.6,738.8 1399.8,746.8 1397.9,754.8 1395.8,762.7 1393.6,770.6 1391.2,778.4 1388.7,786.2 1386.1,794.0 1383.3,801.7 1380.4,809.4 1377.4,817.0 1374.3,824.6 1371.0,832.1 1367.6,839.5 1364.0,846.9 1360.3,854.3 1356.5,861.5 1352.6,868.8 1348.6,875.9 1344.4,883.0 1340.1,890.0 1335.7,896.9 1331.2,903.7 1326.5,910.5 1321.8,917.2 1316.9,923.8 1311.9,930.3 1306.8,936.8 1301.6,943.1 1296.3,949.4 1290.8,955.5 1285.3,961.6 1279.7,967.6 1274.0,973.5 1268.1,979.3 1262.2,984.9 1256.2,990.5 1250.0,996.0 1243.8,1001.3 1237.5,1006.6 1231.1,1011.7 1224.6,1016.8 1218.1,1021.7 1211.4,1026.5 1204.7,1031.2 1197.9,1035.8 1191.0,1040.2 1184.1,1044.5 1177.0,1048.7 1169.9,1052.8 1162.8,1056.7 1155.5,1060.6 1148.2,1064.3 1140.9,1067.8 1133.4,1071.3 1126.0,1074.6 1118.4,1077.8 1110.8,1080.8 1103.2,1083.7 1095.5,1086.5 1087.8,1089.1 1080.0,1091.7 1072.2,1094.0 1064.4,1096.3 1056.5,1098.4 1048.6,1100.3 1040.6,1102.2 1032.6,1103.8 1024.6,1105.4 1016.6,1106.8 1008.5,1108.1 1000.4,1109.2 992.3,1110.2 984.2,1111.0 976.1,1111.7 968.0,1112.3 959.8,1112.7 951.7,1112.9 943.5,1113.1 935.4,1113.1 927.2,1112.9 919.1,1112.6 911.0,1112.1 902.8,1111.6 894.7,1110.8 886.6,1110.0 878.6,1108.9 870.5,1107.8 862.4,1106.5 854.4,1105.0 846.4,1103.5 838.5,1101.7 830.5,1099.9 822.6,1097.9 814.8,1095.8 807.0,1093.5 799.2,1091.1 791.4,1088.5 783.7,1085.8 776.1,1083.0 768.5,1080.1 761.0,1077.0 753.5,1073.8 746.0,1070.4 738.7,1066.9 731.3,1063.3 724.1,1059.6 716.9,1055.7 709.8,1051.7 702.7,1047.6 695.8,1043.4 688.9,1039.0 682.0,1034.5 675.3,1029.9 668.6,1025.2 662.0,1020.3 655.5,1015.3 649.1,1010.3 642.8,1005.1 636.5,999.8 630.4,994.3 624.3,988.8 618.4,983.2 612.5,977.5 606.8,971.6 601.1,965.7 595.5,959.7 590.1,953.6 584.7,947.3 579.5,941.0 574.4,934.6 569.4,928.1 564.5,921.6 559.7,914.9 555.0,908.2 550.4,901.3 546.0,894.4 541.7,887.4 537.5,880.4 533.4,873.3 529.4,866.1 525.6,858.8 521.9,851.5 518.3,844.1 514.9,836.6 511.5,829.1 508.4,821.5 505.3,813.9 502.4,806.2 499.6,798.5 496.9,790.7 494.4,782.9 492.0,775.1 489.8,767.2 487.6,759.2 485.7,751.3 483.8,743.3 482.1,735.2 480.6,727.2 479.2,719.1 477.9,711.0 476.7,702.8 475.7,694.7 474.9,686.5 474.2,678.4 473.6,670.2 473.2,662.0 472.9,653.8 472.8,645.6 472.8,637.4 472.9,629.2 473.2,621.0 473.6,612.8 474.2,604.6 474.9,596.4 475.8,588.3 476.8,580.2 477.9,572.0 479.2,563.9 480.7,555.9 482.2,547.8 483.9,539.8 485.8,531.8 487.8,523.9 489.9,516.0 492.2,508.1 494.6,500.3 497.1,492.5 499.8,484.8 502.6,477.1 505.6,469.4 508.7,461.9 511.9,454.3 515.2,446.9 518.7,439.4 522.3,432.1 526.1,424.8 529.9,417.6 533.9,410.4 538.1,403.4 542.3,396.4 546.7,389.4 551.2,382.6 555.8,375.8 560.5,369.1 565.3,362.5 570.3,356.0 575.4,349.6 580.6,343.2 585.9,337.0 591.3,330.8 596.8,324.8 602.4,318.8 608.2,312.9 614.0,307.2 619.9,301.5 626.0,296.0 632.1,290.5 638.3,285.2 644.7,279.9 651.1,274.8 657.6,269.8 664.2,264.9 670.9,260.1 677.6,255.5 684.5,250.9 691.4,246.5 698.4,242.2 705.5,238.0 712.6,234.0 719.9,230.1 727.2,226.3 734.5,222.6 741.9,219.1 749.4,215.7 757.0,212.4 764.6,209.3 772.2,206.3 779.9,203.4 787.7,200.7 795.5,198.1 803.4,195.6 811.3,193.3 819.2,191.1 827.2,189.0 835.2,187.1 843.2,185.3 851.3,183.7 859.4,182.1 867.5,180.8 875.7,179.6 883.9,178.5 892.1,177.5 900.3,176.7 908.5,176.1 916.7,175.6 925.0,175.2 933.2,175.0 941.5,174.9 949.7,174.9 958.0,175.1 966.2,175.5 974.4,176.0 982.7,176.6 990.9,177.4 999.1,178.3 1007.2,179.3 1015.4,180.5 1023.5,181.8 1031.6,183.3 1039.7,184.9 1047.8,186.7 1055.8,188.5 1063.8,190.6 1071.7,192.7 1079.6,195.0 1087.5,197.5 1095.3,200.0 1103.1,202.7 1110.8,205.6 1118.5,208.5 1126.1,211.7 1133.7,214.9 1141.2,218.2 1148.6,221.7 1156.0,225.4 1163.3,229.1 1170.5,233.0 1177.7,237.0 1184.8,241.1 1191.8,245.4 1198.8,249.8 1205.6,254.3 1212.4,258.9 1219.1,263.6 1225.7,268.5 1232.3,273.4 1238.7,278.5 1245.1,283.7 1251.3,289.0 1257.5,294.4 1263.5,299.9 1269.5,305.5 1275.4,311.2 1281.1,317.0 1286.8,322.9 1292.3,328.9 1297.8,335.0 1303.1,341.2 1308.3,347.5 1313.4,353.9 1318.4,360.4 1323.3,366.9 1328.0,373.5 1332.7,380.3 1337.2,387.1 1341.6,393.9 1345.9,400.9 1350.0,407.9 1354.1,415.0 1358.0,422.2 1361.7,429.4 1365.4,436.7 1368.9,444.0 1372.3,451.5 1375.5,458.9 1378.6,466.5 1381.6,474.0 1384.5,481.7 1387.2,489.4 1389.8,497.1 1392.2,504.9 1394.5,512.7 1396.7,520.5 1398.7,528.4 1400.6,536.4 1402.3,544.3 1403.9,552.3 1405.4,560.3 1406.7,568.4 1407.9,576.4 1409.0,584.5 1409.8,592.6 1410.6,600.8 1411.2,608.9 1411.7,617.0 1412.0,625.2 1412.2,633.3 1412.2,641.5"/><polyline points="1479.3,641.1 1479.2,650.4 1478.9,659.7 1478.5,669.0 1477.9,678.3 1477.1,687.6 1476.1,696.9 1475.0,706.2 1473.8,715.5 1472.3,724.7 1470.7,733.9 1469.0,743.1 1467.1,752.2 1465.0,761.3 1462.8,770.4 1460.4,779.5 1457.9,788.5 1455.2,797.4 1452.3,806.4 1449.3,815.2 1446.2,824.0 1442.9,832.8 1439.4,841.5 1435.8,850.2 1432.0,858.7 1428.1,867.3 1424.0,875.7 1419.8,884.1 1415.5,892.4 1411.0,900.7 1406.4,908.8 1401.6,916.9 1396.7,924.9 1391.7,932.8 1386.5,940.6 1381.2,948.4 1375.7,956.0 1370.2,963.6 1364.4,971.0 1358.6,978.4 1352.7,985.7 1346.6,992.8 1340.4,999.9 1334.1,1006.8 1327.6,1013.6 1321.1,1020.3 1314.4,1027.0 1307.6,1033.4 1300.7,1039.8 1293.7,1046.1 1286.6,1052.2 1279.4,1058.2 1272.1,1064.0 1264.7,1069.7 1257.2,1075.4 1249.6,1080.8 1241.9,1086.2 1234.2,1091.4 1226.3,1096.4 1218.4,1101.4 1210.3,1106.2 1202.2,1110.8 1194.0,1115.4 1185.8,1119.7 1177.4,1124.0 1169.0,1128.0 1160.5,1132.0 1152.0,1135.8 1143.4,1139.4 1134.7,1142.9 1126.0,1146.2 1117.2,1149.4 1108.4,1152.4 1099.5,1155.3 1090.6,1158.0 1081.7,1160.6 1072.6,1163.0 1063.6,1165.2 1054.5,1167.3 1045.4,1169.3 1036.3,1171.0 1027.1,1172.6 1017.9,1174.1 1008.7,1175.4 999.4,1176.5 990.1,1177.5 980.9,1178.3 971.6,1178.9 962.3,1179.4 953.0,1179.7 943.7,1179.8 934.4,1179.8 925.1,1179.6 915.8,1179.3 906.5,1178.8 897.2,1178.1 888.0,1177.3 878.7,1176.3 869.5,1175.1 860.3,1173.8 851.1,1172.3 841.9,1170.7 832.8,1168.9 823.7,1166.9 814.7,1164.8 805.6,1162.5 796.7,1160.1 787.7,1157.5 778.8,1154.7 770.0,1151.8 761.2,1148.7 752.5,1145.5 743.8,1142.2 735.2,1138.6 726.6,1135.0 718.1,1131.1 709.7,1127.1 701.4,1123.0 693.1,1118.8 684.9,1114.3 676.7,1109.8 668.7,1105.1 660.7,1100.2 652.8,1095.3 645.0,1090.1 637.3,1084.9 629.7,1079.5 622.2,1074.0 614.7,1068.3 607.4,1062.5 600.2,1056.6 593.1,1050.6 586.0,1044.4 579.1,1038.1 572.3,1031.7 565.6,1025.1 559.0,1018.4 552.6,1011.7 546.2,1004.8 540.0,997.8 533.9,990.7 527.9,983.4 522.0,976.1 516.3,968.7 510.7,961.2 505.2,953.6 499.8,945.9 494.6,938.1 489.6,930.2 484.6,922.2 479.8,914.1 475.1,906.0 470.6,897.7 466.2,889.4 462.0,881.1 457.9,872.6 454.0,864.1 450.2,855.5 446.5,846.8 443.0,838.1 439.7,829.4 436.5,820.5 433.4,811.6 430.5,802.7 427.8,793.7 425.2,784.7 422.8,775.6 420.5,766.5 418.4,757.4 416.5,748.2 414.7,739.0 413.0,729.7 411.6,720.5 410.3,711.2 409.1,701.9 408.1,692.5 407.3,683.2 406.7,673.8 406.2,664.5 405.8,655.1 405.7,645.7 405.7,636.3 405.8,627.0 406.1,617.6 406.6,608.3 407.3,598.9 408.1,589.6 409.1,580.3 410.2,571.0 411.5,561.7 413.0,552.4 414.6,543.2 416.4,534.0 418.3,524.9 420.4,515.7 422.7,506.7 425.1,497.6 427.7,488.6 430.5,479.7 433.4,470.8 436.4,461.9 439.6,453.2 443.0,444.4 446.5,435.8 450.2,427.2 454.0,418.6 458.0,410.1 462.1,401.7 466.4,393.4 470.8,385.2 475.4,377.0 480.1,368.9 484.9,360.9 489.9,353.0 495.0,345.2 500.3,337.4 505.7,329.8 511.2,322.2 516.9,314.8 522.7,307.4 528.6,300.2 534.7,293.0 540.9,286.0 547.2,279.1 553.6,272.3 560.2,265.6 566.8,259.0 573.6,252.5 580.5,246.2 587.5,239.9 594.7,233.8 601.9,227.9 609.2,222.1 616.7,216.4 624.2,210.8 631.8,205.4 639.6,200.1 647.4,194.9 655.3,189.9 663.3,185.0 671.4,180.2 679.6,175.6 687.9,171.1 696.2,166.8 704.6,162.6 713.1,158.6 721.7,154.7 730.3,151.0 739.0,147.4 747.7,143.9 756.6,140.7 765.4,137.5 774.4,134.6 783.4,131.7 792.4,129.1 801.5,126.6 810.6,124.2 819.8,122.0 829.0,120.0 838.2,118.1 847.5,116.4 856.8,114.8 866.1,113.4 875.4,112.2 884.8,111.1 894.2,110.2 903.6,109.5 913.0,108.9 922.4,108.5 931.9,108.2 941.3,108.1 950.7,108.2 960.2,108.4 969.6,108.8 979.0,109.4 988.4,110.1 997.8,111.0 1007.2,112.0 1016.6,113.2 1025.9,114.6 1035.2,116.1 1044.5,117.8 1053.7,119.6 1062.9,121.6 1072.1,123.8 1081.2,126.1 1090.3,128.6 1099.4,131.2 1108.4,134.0 1117.3,136.9 1126.2,140.0 1135.0,143.3 1143.8,146.7 1152.5,150.2 1161.2,153.9 1169.7,157.7 1178.2,161.7 1186.7,165.9 1195.0,170.2 1203.3,174.6 1211.5,179.2 1219.6,183.9 1227.7,188.7 1235.6,193.7 1243.4,198.8 1251.2,204.1 1258.9,209.5 1266.4,215.0 1273.9,220.6 1281.3,226.4 1288.5,232.3 1295.7,238.4 1302.7,244.5 1309.6,250.8 1316.4,257.2 1323.1,263.8 1329.7,270.4 1336.2,277.2 1342.5,284.0 1348.7,291.0 1354.8,298.1 1360.8,305.3 1366.6,312.6 1372.3,319.9 1377.9,327.4 1383.3,335.0 1388.6,342.7 1393.8,350.5 1398.8,358.3 1403.7,366.2 1408.4,374.3 1413.0,382.4 1417.5,390.5 1421.8,398.8 1426.0,407.1 1430.0,415.5 1433.8,424.0 1437.5,432.5 1441.1,441.2 1444.5,449.8 1447.8,458.5 1450.9,467.3 1453.8,476.1 1456.6,485.0 1459.2,493.9 1461.7,502.9 1464.0,511.9 1466.1,521.0 1468.1,530.1 1469.9,539.2 1471.6,548.4 1473.1,557.6 1474.5,566.8 1475.6,576.0 1476.7,585.3 1477.5,594.5 1478.2,603.8 1478.7,613.1 1479.1,622.4 1479.3,631.8 1479.3,641.1"/><polyline points="1546.4,640.6 1546.3,651.1 1546.0,661.6 1545.4,672.1 1544.7,682.5 1543.8,693.0 1542.8,703.4 1541.5,713.8 1540.1,724.2 1538.5,734.6 1536.7,745.0 1534.7,755.3 1532.6,765.6 1530.2,775.8 1527.7,786.1 1525.0,796.2 1522.2,806.3 1519.1,816.4 1515.9,826.5 1512.5,836.4 1509.0,846.3 1505.2,856.2 1501.3,866.0 1497.2,875.7 1493.0,885.4 1488.6,894.9 1484.0,904.5 1479.3,913.9 1474.4,923.2 1469.4,932.5 1464.1,941.7 1458.8,950.8 1453.2,959.8 1447.6,968.7 1441.7,977.5 1435.8,986.2 1429.6,994.8 1423.4,1003.3 1416.9,1011.7 1410.4,1020.0 1403.7,1028.1 1396.8,1036.2 1389.9,1044.1 1382.7,1051.9 1375.5,1059.5 1368.1,1067.1 1360.6,1074.5 1353.0,1081.8 1345.2,1088.9 1337.4,1095.9 1329.4,1102.8 1321.3,1109.5 1313.1,1116.1 1304.7,1122.6 1296.3,1128.9 1287.8,1135.1 1279.1,1141.1 1270.4,1146.9 1261.5,1152.6 1252.6,1158.2 1243.6,1163.6 1234.5,1168.8 1225.2,1173.9 1216.0,1178.9 1206.6,1183.6 1197.1,1188.2 1187.6,1192.6 1178.0,1196.9 1168.3,1201.0 1158.6,1204.9 1148.8,1208.7 1138.9,1212.3 1129.0,1215.7 1119.0,1218.9 1109.0,1222.0 1098.9,1224.9 1088.8,1227.6 1078.6,1230.1 1068.4,1232.5 1058.2,1234.7 1047.9,1236.6 1037.6,1238.5 1027.2,1240.1 1016.9,1241.5 1006.5,1242.8 996.1,1243.9 985.6,1244.8 975.2,1245.5 964.8,1246.1 954.3,1246.4 943.8,1246.6 933.4,1246.6 922.9,1246.4 912.5,1246.0 902.0,1245.4 891.6,1244.7 881.2,1243.8 870.8,1242.6 860.4,1241.3 850.1,1239.9 839.8,1238.2 829.5,1236.3 819.2,1234.3 809.0,1232.1 798.8,1229.7 788.7,1227.2 778.6,1224.4 768.5,1221.5 758.5,1218.4 748.6,1215.1 738.7,1211.7 728.9,1208.1 719.2,1204.3 709.5,1200.3 699.8,1196.2 690.3,1191.8 680.8,1187.4 671.4,1182.7 662.1,1177.9 652.9,1173.0 643.7,1167.8 634.7,1162.5 625.7,1157.1 616.9,1151.5 608.1,1145.7 599.4,1139.8 590.9,1133.7 582.4,1127.5 574.0,1121.2 565.8,1114.7 557.7,1108.0 549.6,1101.2 541.7,1094.3 534.0,1087.2 526.3,1080.0 518.8,1072.6 511.4,1065.2 504.1,1057.6 496.9,1049.8 489.9,1042.0 483.1,1034.0 476.3,1025.8 469.7,1017.6 463.3,1009.3 456.9,1000.8 450.8,992.2 444.8,983.5 438.9,974.8 433.2,965.9 427.6,956.9 422.2,947.8 416.9,938.7 411.8,929.4 406.9,920.0 402.1,910.6 397.5,901.1 393.1,891.5 388.8,881.9 384.7,872.1 380.7,862.3 377.0,852.4 373.4,842.5 369.9,832.5 366.7,822.5 363.6,812.4 360.7,802.2 357.9,792.0 355.4,781.7 353.0,771.5 350.8,761.1 348.8,750.8 346.9,740.4 345.3,729.9 343.8,719.5 342.5,709.0 341.4,698.5 340.5,688.0 339.7,677.5 339.1,666.9 338.8,656.4 338.6,645.9 338.5,635.3 338.7,624.8 339.1,614.2 339.6,603.7 340.3,593.2 341.2,582.7 342.3,572.2 343.6,561.8 345.1,551.3 346.7,540.9 348.5,530.5 350.5,520.2 352.7,509.9 355.1,499.6 357.6,489.4 360.3,479.3 363.2,469.1 366.3,459.1 369.6,449.1 373.0,439.1 376.6,429.2 380.4,419.4 384.3,409.7 388.5,400.0 392.8,390.4 397.2,380.8 401.9,371.4 406.7,362.0 411.6,352.8 416.7,343.6 422.0,334.5 427.5,325.5 433.1,316.6 438.9,307.7 444.8,299.0 450.9,290.4 457.1,282.0 463.5,273.6 470.0,265.3 476.7,257.2 483.5,249.1 490.4,241.2 497.5,233.4 504.8,225.8 512.1,218.3 519.6,210.9 527.3,203.6 535.0,196.5 542.9,189.5 550.9,182.7 559.1,176.0 567.3,169.4 575.7,163.0 584.2,156.8 592.8,150.6 601.5,144.7 610.3,138.9 619.2,133.2 628.2,127.7 637.3,122.4 646.5,117.2 655.8,112.1 665.2,107.3 674.7,102.6 684.2,98.0 693.9,93.7 703.6,89.5 713.4,85.4 723.2,81.6 733.2,77.9 743.1,74.4 753.2,71.0 763.3,67.9 773.5,64.9 783.7,62.0 794.0,59.4 804.3,56.9 814.7,54.7 825.1,52.6 835.5,50.6 846.0,48.9 856.5,47.3 867.0,45.9 877.5,44.7 888.1,43.7 898.7,42.9 909.3,42.2 919.9,41.8 930.5,41.5 941.2,41.4 951.8,41.4 962.4,41.7 973.0,42.1 983.6,42.8 994.2,43.6 1004.8,44.6 1015.3,45.7 1025.9,47.1 1036.4,48.6 1046.9,50.4 1057.3,52.3 1067.7,54.3 1078.1,56.6 1088.4,59.0 1098.7,61.6 1108.9,64.4 1119.1,67.4 1129.2,70.5 1139.3,73.8 1149.3,77.3 1159.3,81.0 1169.1,84.8 1179.0,88.8 1188.7,92.9 1198.3,97.3 1207.9,101.8 1217.4,106.4 1226.8,111.2 1236.1,116.2 1245.4,121.4 1254.5,126.7 1263.5,132.1 1272.5,137.7 1281.3,143.5 1290.0,149.4 1298.7,155.5 1307.2,161.7 1315.6,168.0 1323.9,174.5 1332.0,181.2 1340.1,188.0 1348.0,194.9 1355.8,201.9 1363.4,209.1 1371.0,216.4 1378.4,223.9 1385.7,231.5 1392.8,239.2 1399.8,247.0 1406.6,255.0 1413.3,263.1 1419.9,271.3 1426.3,279.6 1432.6,288.0 1438.7,296.5 1444.6,305.2 1450.4,313.9 1456.1,322.7 1461.6,331.6 1466.9,340.7 1472.1,349.8 1477.1,359.0 1481.9,368.3 1486.6,377.6 1491.1,387.1 1495.4,396.6 1499.6,406.2 1503.6,415.9 1507.4,425.6 1511.1,435.4 1514.6,445.3 1517.9,455.2 1521.0,465.2 1523.9,475.2 1526.7,485.3 1529.3,495.5 1531.7,505.6 1533.9,515.9 1536.0,526.1 1537.8,536.4 1539.5,546.7 1541.0,557.1 1542.4,567.5 1543.5,577.9 1544.4,588.3 1545.2,598.8 1545.8,609.2 1546.2,619.7 1546.4,630.1 1546.4,640.6"/><polyline points="1613.5,640.2 1613.4,651.8 1613.0,663.4 1612.4,675.1 1611.6,686.7 1610.6,698.3 1609.4,709.9 1608.0,721.5 1606.4,733.0 1604.6,744.5 1602.6,756.0 1600.4,767.5 1598.0,778.9 1595.4,790.3 1592.6,801.6 1589.6,812.9 1586.4,824.2 1583.0,835.4 1579.4,846.5 1575.7,857.6 1571.7,868.6 1567.5,879.5 1563.2,890.4 1558.7,901.2 1554.0,911.9 1549.1,922.6 1544.0,933.1 1538.7,943.6 1533.3,954.0 1527.6,964.3 1521.8,974.5 1515.9,984.6 1509.7,994.6 1503.4,1004.5 1496.9,1014.2 1490.3,1023.9 1483.5,1033.5 1476.5,1042.9 1469.4,1052.2 1462.1,1061.4 1454.6,1070.4 1447.0,1079.3 1439.3,1088.1 1431.4,1096.8 1423.3,1105.3 1415.1,1113.7 1406.8,1121.9 1398.3,1130.0 1389.7,1138.0 1381.0,1145.8 1372.1,1153.4 1363.1,1160.9 1354.0,1168.2 1344.7,1175.4 1335.3,1182.4 1325.9,1189.3 1316.3,1195.9 1306.5,1202.5 1296.7,1208.8 1286.8,1215.0 1276.8,1221.0 1266.6,1226.8 1256.4,1232.5 1246.1,1238.0 1235.7,1243.3 1225.2,1248.4 1214.6,1253.3 1204.0,1258.0 1193.2,1262.6 1182.4,1267.0 1171.5,1271.1 1160.6,1275.1 1149.6,1278.9 1138.5,1282.5 1127.3,1285.9 1116.2,1289.2 1104.9,1292.2 1093.6,1295.0 1082.3,1297.6 1070.9,1300.0 1059.5,1302.3 1048.0,1304.3 1036.6,1306.1 1025.0,1307.7 1013.5,1309.1 1002.0,1310.3 990.4,1311.4 978.8,1312.2 967.2,1312.8 955.6,1313.2 944.0,1313.4 932.4,1313.3 920.8,1313.1 909.2,1312.7 897.6,1312.1 886.0,1311.3 874.4,1310.2 862.9,1309.0 851.4,1307.5 839.9,1305.9 828.4,1304.1 817.0,1302.0 805.6,1299.8 794.3,1297.3 783.0,1294.7 771.7,1291.8 760.5,1288.8 749.4,1285.5 738.3,1282.1 727.2,1278.4 716.3,1274.6 705.4,1270.6 694.5,1266.4 683.8,1262.0 673.1,1257.4 662.5,1252.6 652.0,1247.6 641.6,1242.5 631.2,1237.1 621.0,1231.6 610.8,1225.9 600.8,1220.0 590.8,1214.0 580.9,1207.7 571.2,1201.3 561.6,1194.8 552.1,1188.0 542.7,1181.1 533.4,1174.0 524.2,1166.8 515.2,1159.4 506.3,1151.8 497.5,1144.1 488.9,1136.3 480.4,1128.3 472.0,1120.1 463.8,1111.8 455.7,1103.3 447.7,1094.7 439.9,1086.0 432.3,1077.1 424.8,1068.1 417.5,1059.0 410.3,1049.8 403.3,1040.4 396.4,1030.8 389.7,1021.2 383.2,1011.4 376.8,1001.6 370.7,991.6 364.6,981.5 358.8,971.3 353.1,961.0 347.6,950.6 342.3,940.2 337.2,929.6 332.3,918.9 327.5,908.2 322.9,897.4 318.5,886.5 314.3,875.5 310.3,864.5 306.5,853.4 302.9,842.2 299.4,831.0 296.2,819.7 293.1,808.3 290.3,797.0 287.6,785.5 285.2,774.0 282.9,762.5 280.9,751.0 279.0,739.4 277.3,727.8 275.9,716.1 274.6,704.5 273.6,692.8 272.8,681.1 272.1,669.4 271.7,657.7 271.5,646.0 271.4,634.2 271.6,622.5 272.0,610.8 272.6,599.1 273.4,587.5 274.4,575.8 275.6,564.1 277.0,552.5 278.6,540.9 280.4,529.4 282.4,517.9 284.6,506.4 287.0,494.9 289.7,483.5 292.5,472.2 295.5,460.9 298.7,449.6 302.1,438.5 305.7,427.3 309.5,416.3 313.5,405.3 317.7,394.4 322.1,383.6 326.7,372.8 331.5,362.1 336.4,351.5 341.5,341.0 346.9,330.6 352.4,320.3 358.1,310.1 363.9,300.0 370.0,290.0 376.2,280.1 382.6,270.3 389.2,260.7 395.9,251.1 402.9,241.7 409.9,232.4 417.2,223.2 424.6,214.2 432.2,205.3 439.9,196.5 447.8,187.9 455.8,179.4 464.0,171.0 472.4,162.8 480.8,154.8 489.5,146.9 498.2,139.1 507.1,131.5 516.2,124.1 525.3,116.8 534.6,109.7 544.1,102.7 553.6,95.9 563.3,89.3 573.1,82.8 583.0,76.6 593.0,70.4 603.1,64.5 613.4,58.7 623.7,53.2 634.2,47.8 644.7,42.5 655.3,37.5 666.0,32.6 676.8,28.0 687.7,23.5 698.7,19.2 709.7,15.1 720.8,11.2 732.0,7.5 743.2,4.0 754.5,0.7 765.9,-2.5 777.3,-5.4 788.8,-8.1 800.3,-10.7 811.9,-13.0 823.5,-15.1 835.1,-17.1 846.8,-18.8 858.5,-20.3 870.3,-21.7 882.0,-22.8 893.8,-23.7 905.6,-24.5 917.4,-25.0 929.2,-25.3 941.0,-25.4 952.8,-25.3 964.6,-25.0 976.4,-24.5 988.2,-23.8 1000.0,-22.9 1011.8,-21.8 1023.5,-20.5 1035.2,-19.0 1046.9,-17.3 1058.6,-15.4 1070.2,-13.3 1081.8,-10.9 1093.3,-8.4 1104.8,-5.7 1116.2,-2.8 1127.6,0.3 1138.9,3.6 1150.2,7.1 1161.4,10.7 1172.5,14.6 1183.6,18.7 1194.5,22.9 1205.4,27.4 1216.3,32.0 1227.0,36.8 1237.6,41.8 1248.2,47.0 1258.7,52.3 1269.0,57.9 1279.3,63.6 1289.4,69.5 1299.5,75.5 1309.4,81.8 1319.2,88.2 1328.9,94.8 1338.5,101.5 1348.0,108.4 1357.3,115.5 1366.5,122.7 1375.6,130.1 1384.5,137.6 1393.3,145.3 1402.0,153.1 1410.5,161.1 1418.9,169.2 1427.1,177.5 1435.2,185.9 1443.1,194.5 1450.9,203.2 1458.5,212.0 1465.9,220.9 1473.2,230.0 1480.3,239.2 1487.3,248.6 1494.1,258.1 1500.7,267.7 1507.2,277.4 1513.4,287.2 1519.5,297.1 1525.4,307.1 1531.2,317.2 1536.7,327.4 1542.1,337.7 1547.3,348.1 1552.3,358.6 1557.1,369.2 1561.7,379.9 1566.2,390.6 1570.4,401.4 1574.5,412.3 1578.3,423.3 1582.0,434.3 1585.4,445.4 1588.7,456.5 1591.8,467.7 1594.6,479.0 1597.3,490.3 1599.8,501.6 1602.0,513.0 1604.1,524.5 1606.0,535.9 1607.6,547.4 1609.1,558.9 1610.3,570.5 1611.4,582.1 1612.2,593.7 1612.9,605.3 1613.3,616.9 1613.5,628.5 1613.5,640.2"/><polyline points="1680.7,639.7 1680.4,652.5 1680.0,665.3 1679.4,678.0 1678.5,690.8 1677.4,703.6 1676.0,716.3 1674.5,729.0 1672.7,741.7 1670.7,754.4 1668.5,767.0 1666.1,779.6 1663.4,792.2 1660.5,804.7 1657.5,817.2 1654.1,829.6 1650.6,841.9 1646.9,854.2 1642.9,866.5 1638.8,878.6 1634.4,890.8 1629.8,902.8 1625.1,914.7 1620.1,926.6 1614.9,938.4 1609.5,950.1 1603.9,961.7 1598.1,973.2 1592.1,984.7 1585.9,996.0 1579.5,1007.2 1572.9,1018.3 1566.2,1029.3 1559.2,1040.2 1552.1,1050.9 1544.8,1061.5 1537.3,1072.0 1529.6,1082.4 1521.7,1092.6 1513.7,1102.7 1505.5,1112.7 1497.2,1122.5 1488.6,1132.1 1479.9,1141.7 1471.1,1151.0 1462.1,1160.3 1452.9,1169.3 1443.6,1178.2 1434.1,1187.0 1424.5,1195.5 1414.7,1204.0 1404.8,1212.2 1394.8,1220.3 1384.6,1228.2 1374.3,1235.9 1363.9,1243.4 1353.3,1250.8 1342.7,1258.0 1331.9,1265.0 1320.9,1271.8 1309.9,1278.4 1298.8,1284.8 1287.5,1291.0 1276.2,1297.0 1264.8,1302.9 1253.2,1308.5 1241.6,1313.9 1229.9,1319.1 1218.1,1324.2 1206.2,1329.0 1194.2,1333.6 1182.2,1338.0 1170.1,1342.2 1157.9,1346.1 1145.7,1349.9 1133.4,1353.4 1121.0,1356.7 1108.6,1359.9 1096.1,1362.7 1083.6,1365.4 1071.1,1367.9 1058.5,1370.1 1045.9,1372.1 1033.2,1373.9 1020.5,1375.4 1007.8,1376.8 995.1,1377.9 982.4,1378.8 969.7,1379.5 956.9,1379.9 944.1,1380.1 931.4,1380.1 918.6,1379.9 905.9,1379.4 893.1,1378.7 880.4,1377.8 867.7,1376.7 855.0,1375.3 842.4,1373.8 829.7,1372.0 817.1,1369.9 804.6,1367.7 792.1,1365.2 779.6,1362.5 767.2,1359.6 754.8,1356.5 742.5,1353.1 730.2,1349.5 718.0,1345.8 705.9,1341.8 693.9,1337.6 681.9,1333.1 670.0,1328.5 658.1,1323.6 646.4,1318.6 634.7,1313.3 623.2,1307.9 611.7,1302.2 600.3,1296.3 589.1,1290.2 577.9,1284.0 566.9,1277.5 555.9,1270.8 545.1,1264.0 534.4,1256.9 523.8,1249.7 513.3,1242.3 503.0,1234.7 492.8,1226.9 482.7,1218.9 472.8,1210.8 463.0,1202.5 453.3,1194.0 443.8,1185.4 434.5,1176.5 425.3,1167.6 416.2,1158.4 407.3,1149.1 398.6,1139.7 390.0,1130.0 381.6,1120.3 373.4,1110.4 365.3,1100.3 357.4,1090.2 349.7,1079.8 342.1,1069.4 334.8,1058.8 327.6,1048.1 320.6,1037.2 313.8,1026.2 307.1,1015.1 300.7,1003.9 294.5,992.6 288.4,981.2 282.6,969.7 276.9,958.0 271.5,946.3 266.2,934.5 261.2,922.6 256.3,910.6 251.7,898.5 247.3,886.4 243.1,874.2 239.1,861.9 235.3,849.5 231.7,837.1 228.3,824.7 225.2,812.1 222.3,799.6 219.6,786.9 217.1,774.3 214.8,761.6 212.7,748.8 210.9,736.0 209.3,723.2 207.9,710.4 206.8,697.6 205.8,684.7 205.1,671.8 204.6,658.9 204.3,646.1 204.3,633.2 204.5,620.3 204.9,607.4 205.5,594.6 206.4,581.7 207.5,568.9 208.8,556.1 210.3,543.3 212.1,530.5 214.1,517.8 216.3,505.2 218.7,492.5 221.3,479.9 224.2,467.4 227.3,454.9 230.6,442.5 234.1,430.1 237.9,417.8 241.8,405.6 246.0,393.5 250.4,381.4 255.0,369.4 259.8,357.5 264.9,345.6 270.1,333.9 275.5,322.2 281.2,310.7 287.0,299.3 293.1,287.9 299.4,276.7 305.8,265.6 312.5,254.6 319.3,243.7 326.3,232.9 333.6,222.3 341.0,211.8 348.6,201.5 356.4,191.3 364.3,181.2 372.5,171.2 380.8,161.5 389.3,151.8 398.0,142.3 406.8,133.0 415.8,123.8 425.0,114.8 434.3,105.9 443.8,97.2 453.5,88.7 463.3,80.3 473.2,72.1 483.3,64.1 493.6,56.3 503.9,48.6 514.4,41.2 525.1,33.9 535.9,26.8 546.8,19.9 557.8,13.1 568.9,6.6 580.2,0.3 591.6,-5.9 603.1,-11.8 614.6,-17.5 626.3,-23.1 638.1,-28.4 650.0,-33.5 662.0,-38.5 674.1,-43.2 686.2,-47.7 698.4,-52.0 710.8,-56.1 723.1,-59.9 735.6,-63.6 748.1,-67.0 760.7,-70.2 773.3,-73.2 786.0,-76.0 798.7,-78.6 811.5,-80.9 824.3,-83.1 837.2,-85.0 850.1,-86.6 863.0,-88.1 875.9,-89.3 888.9,-90.3 901.9,-91.1 914.9,-91.7 927.9,-92.0 940.9,-92.2 953.9,-92.1 966.9,-91.7 979.9,-91.2 992.9,-90.4 1005.8,-89.4 1018.8,-88.2 1031.7,-86.7 1044.6,-85.1 1057.5,-83.2 1070.3,-81.1 1083.1,-78.8 1095.8,-76.2 1108.5,-73.5 1121.2,-70.5 1133.7,-67.3 1146.3,-63.9 1158.7,-60.2 1171.1,-56.4 1183.5,-52.3 1195.7,-48.1 1207.9,-43.6 1220.0,-38.9 1232.0,-34.0 1243.9,-28.9 1255.7,-23.6 1267.4,-18.1 1279.0,-12.4 1290.5,-6.5 1301.9,-0.5 1313.2,5.8 1324.4,12.3 1335.5,19.0 1346.4,25.8 1357.2,32.9 1367.9,40.1 1378.4,47.5 1388.8,55.1 1399.1,62.9 1409.2,70.9 1419.2,79.0 1429.0,87.3 1438.7,95.7 1448.3,104.3 1457.6,113.1 1466.8,122.1 1475.9,131.2 1484.8,140.4 1493.5,149.8 1502.0,159.4 1510.4,169.1 1518.6,178.9 1526.6,188.9 1534.4,199.1 1542.1,209.3 1549.6,219.7 1556.8,230.2 1563.9,240.9 1570.8,251.7 1577.5,262.6 1584.0,273.6 1590.3,284.7 1596.4,295.9 1602.3,307.3 1608.0,318.7 1613.5,330.2 1618.8,341.9 1623.9,353.6 1628.8,365.4 1633.4,377.3 1637.9,389.2 1642.1,401.3 1646.1,413.4 1649.9,425.6 1653.5,437.8 1656.8,450.1 1660.0,462.5 1662.9,474.9 1665.6,487.4 1668.1,499.9 1670.4,512.5 1672.4,525.1 1674.2,537.7 1675.8,550.4 1677.2,563.1 1678.3,575.8 1679.2,588.6 1679.9,601.3 1680.4,614.1 1680.6,626.9 1680.7,639.7"/><polyline points="1747.8,639.2 1747.5,653.1 1747.0,667.0 1746.3,681.0 1745.3,694.9 1744.1,708.8 1742.7,722.7 1740.9,736.6 1739.0,750.4 1736.8,764.2 1734.4,778.0 1731.7,791.7 1728.8,805.4 1725.7,819.0 1722.3,832.6 1718.7,846.2 1714.8,859.6 1710.7,873.1 1706.4,886.4 1701.9,899.7 1697.1,912.9 1692.1,926.0 1686.9,939.0 1681.4,952.0 1675.7,964.8 1669.8,977.6 1663.7,990.3 1657.4,1002.8 1650.8,1015.3 1644.1,1027.6 1637.1,1039.9 1629.9,1051.9 1622.5,1063.9 1615.0,1075.8 1607.2,1087.5 1599.2,1099.1 1591.0,1110.5 1582.6,1121.8 1574.1,1133.0 1565.3,1144.0 1556.4,1154.8 1547.2,1165.5 1537.9,1176.1 1528.4,1186.5 1518.8,1196.7 1508.9,1206.8 1498.9,1216.7 1488.8,1226.4 1478.4,1235.9 1468.0,1245.3 1457.3,1254.5 1446.5,1263.5 1435.6,1272.3 1424.5,1280.9 1413.2,1289.3 1401.9,1297.6 1390.4,1305.6 1378.7,1313.4 1366.9,1321.1 1355.0,1328.5 1343.0,1335.7 1330.9,1342.7 1318.6,1349.5 1306.3,1356.1 1293.8,1362.5 1281.2,1368.6 1268.5,1374.5 1255.7,1380.2 1242.9,1385.7 1229.9,1391.0 1216.9,1396.0 1203.8,1400.8 1190.6,1405.4 1177.3,1409.7 1163.9,1413.8 1150.5,1417.7 1137.1,1421.3 1123.5,1424.7 1110.0,1427.9 1096.3,1430.8 1082.6,1433.5 1068.9,1435.9 1055.2,1438.1 1041.4,1440.0 1027.6,1441.8 1013.7,1443.2 999.9,1444.4 986.0,1445.4 972.1,1446.2 958.2,1446.6 944.3,1446.9 930.4,1446.9 916.5,1446.6 902.6,1446.1 888.7,1445.4 874.8,1444.4 861.0,1443.2 847.2,1441.7 833.4,1440.0 819.6,1438.0 805.9,1435.8 792.2,1433.3 778.5,1430.7 764.9,1427.7 751.4,1424.5 737.9,1421.1 724.5,1417.5 711.1,1413.6 697.8,1409.5 684.6,1405.1 671.5,1400.5 658.4,1395.7 645.4,1390.6 632.5,1385.3 619.7,1379.8 607.0,1374.1 594.4,1368.1 581.9,1361.9 569.5,1355.5 557.2,1348.9 545.1,1342.1 533.0,1335.0 521.1,1327.7 509.3,1320.3 497.6,1312.6 486.1,1304.7 474.6,1296.6 463.4,1288.3 452.2,1279.8 441.3,1271.1 430.4,1262.2 419.7,1253.1 409.2,1243.9 398.8,1234.4 388.6,1224.8 378.6,1215.0 368.7,1205.0 359.0,1194.9 349.5,1184.6 340.1,1174.1 330.9,1163.4 322.0,1152.6 313.1,1141.7 304.5,1130.6 296.1,1119.3 287.9,1107.9 279.8,1096.3 272.0,1084.6 264.3,1072.8 256.9,1060.8 249.7,1048.8 242.7,1036.5 235.8,1024.2 229.2,1011.7 222.9,999.1 216.7,986.5 210.7,973.7 205.0,960.8 199.5,947.8 194.2,934.7 189.1,921.6 184.3,908.3 179.7,895.0 175.3,881.6 171.2,868.1 167.3,854.6 163.6,840.9 160.1,827.3 156.9,813.6 154.0,799.8 151.2,786.0 148.7,772.1 146.5,758.2 144.5,744.3 142.7,730.3 141.2,716.3 139.9,702.3 138.9,688.3 138.1,674.2 137.5,660.2 137.2,646.1 137.2,632.1 137.4,618.0 137.8,604.0 138.5,590.0 139.4,575.9 140.6,562.0 142.0,548.0 143.7,534.0 145.6,520.1 147.7,506.3 150.1,492.5 152.8,478.7 155.6,464.9 158.7,451.3 162.1,437.7 165.7,424.1 169.5,410.6 173.6,397.2 177.9,383.9 182.5,370.6 187.3,357.4 192.3,344.3 197.5,331.4 203.0,318.4 208.7,305.6 214.6,292.9 220.8,280.3 227.2,267.9 233.8,255.5 240.6,243.2 247.6,231.1 254.9,219.1 262.3,207.3 270.0,195.6 277.9,184.0 286.0,172.6 294.3,161.3 302.8,150.1 311.4,139.1 320.3,128.3 329.4,117.6 338.7,107.1 348.1,96.7 357.8,86.5 367.6,76.5 377.6,66.7 387.8,57.0 398.2,47.5 408.7,38.2 419.4,29.1 430.2,20.2 441.2,11.4 452.4,2.9 463.7,-5.4 475.2,-13.6 486.8,-21.5 498.6,-29.3 510.5,-36.8 522.5,-44.2 534.7,-51.3 547.0,-58.2 559.4,-64.9 571.9,-71.4 584.6,-77.6 597.3,-83.7 610.2,-89.5 623.2,-95.1 636.3,-100.4 649.4,-105.6 662.7,-110.5 676.0,-115.2 689.5,-119.6 703.0,-123.8 716.6,-127.8 730.2,-131.6 744.0,-135.1 757.8,-138.3 771.6,-141.4 785.5,-144.2 799.5,-146.7 813.5,-149.0 827.5,-151.1 841.6,-152.9 855.7,-154.5 869.8,-155.9 884.0,-157.0 898.1,-157.8 912.3,-158.4 926.5,-158.8 940.7,-158.9 954.9,-158.8 969.1,-158.4 983.3,-157.8 997.5,-157.0 1011.6,-155.9 1025.8,-154.6 1039.9,-153.0 1054.0,-151.2 1068.0,-149.1 1082.0,-146.8 1096.0,-144.3 1109.9,-141.5 1123.8,-138.5 1137.6,-135.2 1151.3,-131.7 1165.0,-128.0 1178.6,-124.0 1192.1,-119.8 1205.6,-115.4 1218.9,-110.7 1232.2,-105.9 1245.4,-100.7 1258.5,-95.4 1271.5,-89.9 1284.4,-84.1 1297.2,-78.1 1309.9,-71.8 1322.5,-65.4 1334.9,-58.8 1347.2,-51.9 1359.4,-44.8 1371.5,-37.5 1383.4,-30.1 1395.2,-22.4 1406.9,-14.5 1418.4,-6.4 1429.7,1.9 1441.0,10.4 1452.0,19.0 1462.9,27.9 1473.6,36.9 1484.2,46.2 1494.6,55.6 1504.8,65.2 1514.9,74.9 1524.7,84.8 1534.4,94.9 1543.9,105.2 1553.2,115.6 1562.4,126.2 1571.3,137.0 1580.0,147.9 1588.6,158.9 1596.9,170.1 1605.1,181.4 1613.0,192.9 1620.7,204.5 1628.2,216.2 1635.5,228.1 1642.6,240.1 1649.5,252.2 1656.2,264.5 1662.6,276.8 1668.8,289.3 1674.8,301.9 1680.5,314.6 1686.1,327.3 1691.4,340.2 1696.5,353.2 1701.3,366.2 1705.9,379.3 1710.3,392.5 1714.4,405.8 1718.3,419.2 1722.0,432.6 1725.4,446.1 1728.6,459.6 1731.5,473.2 1734.2,486.9 1736.7,500.6 1738.9,514.3 1740.8,528.1 1742.6,541.9 1744.0,555.7 1745.3,569.6 1746.3,583.5 1747.0,597.4 1747.5,611.3 1747.7,625.2 1747.8,639.2"/><polyline points="1814.9,638.6 1814.6,653.7 1814.1,668.8 1813.2,683.9 1812.2,699.0 1810.8,714.0 1809.3,729.0 1807.4,744.1 1805.3,759.0 1802.9,774.0 1800.2,788.9 1797.3,803.7 1794.2,818.6 1790.8,833.3 1787.1,848.0 1783.2,862.7 1779.0,877.3 1774.5,891.8 1769.8,906.3 1764.9,920.6 1759.7,934.9 1754.3,949.1 1748.6,963.2 1742.7,977.3 1736.5,991.2 1730.1,1005.0 1723.5,1018.7 1716.6,1032.3 1709.5,1045.8 1702.2,1059.2 1694.7,1072.4 1686.9,1085.5 1678.9,1098.5 1670.7,1111.3 1662.2,1124.0 1653.5,1136.5 1644.7,1148.9 1635.6,1161.2 1626.3,1173.3 1616.8,1185.2 1607.1,1197.0 1597.2,1208.6 1587.2,1220.0 1576.9,1231.3 1566.4,1242.4 1555.8,1253.3 1544.9,1264.0 1533.9,1274.5 1522.7,1284.9 1511.4,1295.0 1499.8,1305.0 1488.2,1314.7 1476.3,1324.3 1464.3,1333.6 1452.1,1342.7 1439.8,1351.7 1427.3,1360.4 1414.7,1368.9 1402.0,1377.1 1389.1,1385.2 1376.1,1393.0 1362.9,1400.6 1349.6,1408.0 1336.3,1415.1 1322.8,1422.0 1309.1,1428.7 1295.4,1435.1 1281.6,1441.3 1267.6,1447.2 1253.6,1452.9 1239.5,1458.4 1225.3,1463.6 1211.0,1468.6 1196.6,1473.3 1182.2,1477.7 1167.7,1481.9 1153.1,1485.9 1138.5,1489.5 1123.8,1493.0 1109.0,1496.1 1094.2,1499.0 1079.3,1501.7 1064.5,1504.1 1049.5,1506.2 1034.6,1508.1 1019.6,1509.7 1004.6,1511.0 989.6,1512.0 974.5,1512.8 959.5,1513.4 944.4,1513.6 929.4,1513.6 914.3,1513.4 899.3,1512.8 884.3,1512.0 869.3,1511.0 854.3,1509.7 839.3,1508.1 824.4,1506.2 809.5,1504.1 794.6,1501.7 779.8,1499.0 765.0,1496.1 750.3,1492.9 735.7,1489.5 721.1,1485.8 706.5,1481.9 692.1,1477.6 677.7,1473.2 663.4,1468.5 649.1,1463.5 635.0,1458.2 620.9,1452.8 607.0,1447.0 593.1,1441.1 579.4,1434.9 565.7,1428.4 552.2,1421.7 538.8,1414.7 525.5,1407.6 512.3,1400.2 499.2,1392.5 486.3,1384.6 473.5,1376.5 460.9,1368.2 448.4,1359.6 436.0,1350.9 423.8,1341.9 411.8,1332.7 399.9,1323.3 388.1,1313.6 376.5,1303.8 365.1,1293.8 353.9,1283.5 342.9,1273.1 332.0,1262.5 321.3,1251.7 310.8,1240.7 300.4,1229.5 290.3,1218.1 280.4,1206.6 270.6,1194.9 261.1,1183.0 251.7,1170.9 242.6,1158.7 233.7,1146.4 225.0,1133.8 216.5,1121.2 208.2,1108.4 200.1,1095.4 192.3,1082.3 184.7,1069.1 177.3,1055.7 170.1,1042.2 163.2,1028.6 156.5,1014.8 150.0,1001.0 143.8,987.0 137.8,972.9 132.1,958.8 126.6,944.5 121.3,930.2 116.3,915.7 111.6,901.2 107.1,886.6 102.8,871.9 98.8,857.2 95.1,842.4 91.6,827.5 88.4,812.6 85.4,797.6 82.7,782.6 80.3,767.6 78.1,752.5 76.2,737.4 74.5,722.2 73.1,707.0 72.0,691.8 71.1,676.6 70.5,661.4 70.1,646.2 70.1,631.0 70.3,615.7 70.7,600.5 71.4,585.3 72.4,570.2 73.7,555.0 75.2,539.9 77.0,524.8 79.0,509.7 81.4,494.7 83.9,479.7 86.8,464.8 89.9,450.0 93.3,435.1 96.9,420.4 100.8,405.7 104.9,391.1 109.3,376.6 114.0,362.1 118.9,347.8 124.1,333.5 129.5,319.3 135.2,305.2 141.1,291.3 147.3,277.4 153.7,263.6 160.3,250.0 167.2,236.5 174.4,223.1 181.8,209.8 189.4,196.7 197.2,183.8 205.3,170.9 213.6,158.2 222.1,145.7 230.9,133.3 239.9,121.0 249.1,109.0 258.5,97.1 268.1,85.3 277.9,73.7 288.0,62.3 298.2,51.1 308.7,40.1 319.3,29.2 330.2,18.6 341.2,8.1 352.4,-2.2 363.8,-12.2 375.4,-22.1 387.2,-31.8 399.1,-41.3 411.2,-50.5 423.5,-59.6 435.9,-68.4 448.5,-77.0 461.2,-85.4 474.1,-93.6 487.2,-101.5 500.4,-109.2 513.7,-116.7 527.1,-123.9 540.7,-130.9 554.4,-137.7 568.3,-144.3 582.2,-150.6 596.3,-156.6 610.5,-162.4 624.8,-168.0 639.1,-173.3 653.6,-178.4 668.2,-183.2 682.8,-187.7 697.6,-192.1 712.4,-196.1 727.3,-199.9 742.2,-203.4 757.2,-206.7 772.3,-209.8 787.4,-212.5 802.6,-215.0 817.8,-217.3 833.1,-219.2 848.4,-220.9 863.7,-222.4 879.0,-223.6 894.4,-224.5 909.8,-225.2 925.2,-225.6 940.6,-225.7 956.0,-225.6 971.4,-225.2 986.7,-224.5 1002.1,-223.6 1017.5,-222.4 1032.8,-220.9 1048.1,-219.2 1063.4,-217.2 1078.6,-215.0 1093.8,-212.5 1108.9,-209.7 1124.0,-206.7 1139.0,-203.4 1154.0,-199.9 1168.9,-196.1 1183.7,-192.1 1198.5,-187.8 1213.1,-183.2 1227.7,-178.4 1242.2,-173.4 1256.6,-168.1 1270.9,-162.6 1285.1,-156.8 1299.2,-150.7 1313.2,-144.5 1327.1,-138.0 1340.8,-131.2 1354.4,-124.3 1367.9,-117.1 1381.3,-109.6 1394.5,-102.0 1407.6,-94.1 1420.5,-86.0 1433.3,-77.6 1445.9,-69.1 1458.4,-60.3 1470.7,-51.3 1482.9,-42.1 1494.8,-32.7 1506.6,-23.1 1518.3,-13.3 1529.7,-3.4 1541.0,6.8 1552.1,17.2 1562.9,27.8 1573.6,38.6 1584.1,49.5 1594.4,60.6 1604.5,71.9 1614.4,83.4 1624.1,95.0 1633.5,106.8 1642.8,118.8 1651.8,130.9 1660.6,143.1 1669.2,155.6 1677.6,168.1 1685.7,180.9 1693.6,193.7 1701.3,206.7 1708.7,219.8 1715.9,233.1 1722.9,246.4 1729.6,259.9 1736.1,273.6 1742.3,287.3 1748.3,301.1 1754.1,315.0 1759.5,329.1 1764.8,343.2 1769.8,357.4 1774.5,371.7 1778.9,386.1 1783.2,400.5 1787.1,415.1 1790.8,429.7 1794.2,444.3 1797.4,459.0 1800.3,473.8 1803.0,488.6 1805.3,503.5 1807.5,518.4 1809.3,533.3 1810.9,548.3 1812.2,563.3 1813.3,578.4 1814.1,593.4 1814.6,608.5 1814.9,623.6 1814.9,638.6"/><polyline points="1882.0,638.2 1881.7,654.4 1881.1,670.6 1880.2,686.9 1879.0,703.1 1877.6,719.3 1875.8,735.4 1873.8,751.6 1871.5,767.7 1868.9,783.8 1866.1,799.8 1862.9,815.8 1859.5,831.7 1855.8,847.6 1851.9,863.4 1847.6,879.2 1843.1,894.9 1838.3,910.5 1833.3,926.1 1827.9,941.5 1822.3,956.9 1816.5,972.2 1810.3,987.4 1804.0,1002.5 1797.3,1017.5 1790.4,1032.3 1783.3,1047.1 1775.9,1061.7 1768.2,1076.2 1760.3,1090.6 1752.2,1104.9 1743.8,1119.0 1735.2,1133.0 1726.3,1146.8 1717.2,1160.4 1707.9,1174.0 1698.3,1187.3 1688.5,1200.5 1678.5,1213.5 1668.3,1226.4 1657.9,1239.1 1647.2,1251.6 1636.3,1263.9 1625.3,1276.0 1614.0,1288.0 1602.5,1299.7 1590.9,1311.3 1579.0,1322.6 1567.0,1333.7 1554.7,1344.7 1542.3,1355.4 1529.7,1365.9 1517.0,1376.2 1504.0,1386.3 1490.9,1396.1 1477.7,1405.7 1464.2,1415.1 1450.7,1424.3 1436.9,1433.2 1423.1,1441.9 1409.1,1450.3 1394.9,1458.5 1380.6,1466.4 1366.2,1474.1 1351.7,1481.6 1337.0,1488.7 1322.2,1495.7 1307.4,1502.3 1292.4,1508.8 1277.3,1514.9 1262.1,1520.8 1246.8,1526.4 1231.4,1531.7 1216.0,1536.8 1200.4,1541.6 1184.8,1546.1 1169.1,1550.4 1153.3,1554.4 1137.5,1558.1 1121.7,1561.5 1105.7,1564.6 1089.7,1567.5 1073.7,1570.1 1057.7,1572.3 1041.6,1574.4 1025.5,1576.1 1009.3,1577.5 993.1,1578.7 977.0,1579.5 960.8,1580.1 944.6,1580.4 928.4,1580.4 912.2,1580.1 896.0,1579.6 879.8,1578.7 863.7,1577.6 847.6,1576.1 831.5,1574.4 815.4,1572.4 799.4,1570.1 783.4,1567.6 767.4,1564.7 751.6,1561.6 735.7,1558.2 719.9,1554.5 704.2,1550.5 688.6,1546.2 673.0,1541.7 657.5,1536.9 642.1,1531.8 626.8,1526.5 611.6,1520.8 596.5,1514.9 581.5,1508.8 566.6,1502.3 551.8,1495.6 537.1,1488.7 522.5,1481.5 508.1,1474.0 493.7,1466.2 479.5,1458.3 465.5,1450.0 451.6,1441.5 437.8,1432.8 424.2,1423.8 410.8,1414.6 397.4,1405.2 384.3,1395.5 371.3,1385.6 358.5,1375.4 345.9,1365.1 333.4,1354.5 321.1,1343.7 309.0,1332.6 297.1,1321.4 285.4,1310.0 273.9,1298.3 262.6,1286.5 251.5,1274.4 240.5,1262.2 229.8,1249.7 219.3,1237.1 209.1,1224.3 199.0,1211.3 189.1,1198.2 179.5,1184.9 170.1,1171.4 161.0,1157.7 152.1,1143.9 143.4,1129.9 134.9,1115.8 126.7,1101.6 118.7,1087.2 111.0,1072.6 103.6,1058.0 96.3,1043.2 89.4,1028.3 82.7,1013.2 76.2,998.1 70.0,982.8 64.1,967.4 58.4,952.0 53.0,936.4 47.9,920.8 43.0,905.1 38.5,889.3 34.1,873.4 30.1,857.5 26.3,841.5 22.8,825.4 19.6,809.3 16.7,793.1 14.1,776.9 11.7,760.7 9.6,744.4 7.8,728.1 6.3,711.8 5.0,695.4 4.1,679.0 3.4,662.7 3.0,646.3 2.9,629.9 3.1,613.5 3.6,597.1 4.4,580.8 5.4,564.4 6.8,548.1 8.4,531.8 10.3,515.5 12.5,499.3 15.0,483.1 17.7,467.0 20.8,451.0 24.1,435.0 27.7,419.0 31.6,403.1 35.8,387.3 40.3,371.6 45.0,356.0 50.0,340.4 55.3,324.9 60.8,309.6 66.7,294.3 72.8,279.2 79.1,264.1 85.8,249.2 92.7,234.4 99.8,219.7 107.3,205.1 114.9,190.7 122.9,176.5 131.1,162.3 139.5,148.3 148.2,134.5 157.2,120.8 166.3,107.3 175.8,94.0 185.4,80.8 195.3,67.8 205.5,55.0 215.8,42.3 226.4,29.9 237.2,17.6 248.3,5.5 259.5,-6.4 271.0,-18.1 282.7,-29.6 294.5,-40.8 306.6,-51.9 318.9,-62.7 331.4,-73.4 344.0,-83.8 356.9,-94.0 369.9,-104.0 383.1,-113.7 396.5,-123.2 410.1,-132.5 423.8,-141.5 437.7,-150.3 451.8,-158.8 466.0,-167.1 480.3,-175.2 494.8,-183.0 509.5,-190.6 524.3,-197.8 539.2,-204.9 554.2,-211.7 569.4,-218.2 584.6,-224.4 600.0,-230.4 615.5,-236.1 631.1,-241.6 646.8,-246.8 662.6,-251.7 678.5,-256.3 694.5,-260.7 710.5,-264.8 726.6,-268.6 742.8,-272.1 759.0,-275.3 775.3,-278.3 791.7,-281.0 808.1,-283.4 824.5,-285.5 841.0,-287.4 857.5,-288.9 874.1,-290.2 890.6,-291.2 907.2,-291.9 923.8,-292.3 940.4,-292.5 957.0,-292.3 973.6,-291.9 990.2,-291.1 1006.8,-290.1 1023.3,-288.9 1039.8,-287.3 1056.3,-285.4 1072.8,-283.3 1089.2,-280.9 1105.5,-278.2 1121.9,-275.2 1138.1,-272.0 1154.3,-268.4 1170.5,-264.6 1186.5,-260.5 1202.5,-256.2 1218.4,-251.5 1234.2,-246.6 1249.9,-241.5 1265.6,-236.0 1281.1,-230.3 1296.5,-224.4 1311.8,-218.1 1327.0,-211.6 1342.0,-204.9 1357.0,-197.9 1371.8,-190.6 1386.5,-183.1 1401.0,-175.3 1415.4,-167.3 1429.6,-159.1 1443.7,-150.6 1457.7,-141.8 1471.4,-132.8 1485.0,-123.6 1498.5,-114.2 1511.7,-104.5 1524.8,-94.6 1537.7,-84.5 1550.4,-74.2 1563.0,-63.6 1575.3,-52.9 1587.4,-41.9 1599.4,-30.7 1611.1,-19.3 1622.6,-7.7 1633.9,4.1 1645.0,16.0 1655.8,28.2 1666.5,40.5 1676.9,53.1 1687.1,65.8 1697.1,78.6 1706.8,91.7 1716.3,104.9 1725.5,118.3 1734.5,131.8 1743.3,145.5 1751.8,159.3 1760.0,173.3 1768.0,187.4 1775.8,201.7 1783.3,216.1 1790.5,230.6 1797.5,245.3 1804.2,260.0 1810.6,274.9 1816.8,289.9 1822.7,305.0 1828.3,320.2 1833.6,335.5 1838.7,350.9 1843.5,366.4 1848.0,381.9 1852.3,397.5 1856.3,413.2 1859.9,429.0 1863.3,444.9 1866.5,460.8 1869.3,476.7 1871.8,492.7 1874.1,508.8 1876.1,524.8 1877.8,541.0 1879.2,557.1 1880.3,573.3 1881.2,589.5 1881.7,605.7 1882.0,621.9 1882.0,638.2"/><polyline points="1949.1,637.9 1948.7,655.3 1948.1,672.7 1947.1,690.0 1945.9,707.4 1944.3,724.7 1942.4,742.1 1940.2,759.3 1937.8,776.6 1935.0,793.8 1931.9,811.0 1928.5,828.1 1924.9,845.2 1920.9,862.2 1916.6,879.1 1912.1,895.9 1907.2,912.7 1902.1,929.4 1896.6,946.1 1890.9,962.6 1884.9,979.0 1878.6,995.3 1872.0,1011.6 1865.2,1027.7 1858.1,1043.7 1850.7,1059.6 1843.0,1075.4 1835.0,1091.1 1826.8,1106.6 1818.4,1122.0 1809.6,1137.3 1800.6,1152.4 1791.4,1167.4 1781.9,1182.2 1772.1,1196.9 1762.1,1211.3 1751.9,1225.7 1741.4,1239.8 1730.7,1253.8 1719.7,1267.5 1708.5,1281.1 1697.1,1294.5 1685.5,1307.7 1673.6,1320.7 1661.5,1333.5 1649.2,1346.1 1636.7,1358.5 1624.0,1370.7 1611.1,1382.6 1598.0,1394.3 1584.7,1405.8 1571.2,1417.1 1557.6,1428.1 1543.7,1438.9 1529.7,1449.5 1515.5,1459.8 1501.1,1469.8 1486.6,1479.6 1471.9,1489.2 1457.0,1498.5 1442.0,1507.5 1426.9,1516.3 1411.6,1524.8 1396.1,1533.1 1380.6,1541.1 1364.9,1548.8 1349.0,1556.2 1333.1,1563.4 1317.1,1570.2 1300.9,1576.8 1284.6,1583.1 1268.3,1589.2 1251.8,1594.9 1235.2,1600.3 1218.6,1605.5 1201.9,1610.4 1185.1,1614.9 1168.2,1619.2 1151.3,1623.2 1134.3,1626.8 1117.2,1630.2 1100.1,1633.3 1083.0,1636.0 1065.8,1638.5 1048.6,1640.6 1031.3,1642.5 1014.0,1644.0 996.7,1645.3 979.4,1646.2 962.1,1646.9 944.7,1647.2 927.4,1647.2 910.1,1646.9 892.7,1646.3 875.4,1645.4 858.1,1644.2 840.9,1642.6 823.6,1640.8 806.4,1638.7 789.3,1636.2 772.2,1633.5 755.1,1630.4 738.1,1627.1 721.1,1623.4 704.3,1619.4 687.4,1615.2 670.7,1610.6 654.0,1605.8 637.5,1600.6 621.0,1595.2 604.6,1589.4 588.3,1583.4 572.1,1577.1 556.0,1570.5 540.0,1563.6 524.2,1556.4 508.5,1549.0 492.9,1541.2 477.4,1533.2 462.1,1524.9 446.9,1516.4 431.8,1507.6 416.9,1498.5 402.2,1489.1 387.6,1479.5 373.2,1469.6 358.9,1459.5 344.9,1449.1 331.0,1438.5 317.2,1427.6 303.7,1416.5 290.3,1405.2 277.2,1393.6 264.2,1381.7 251.5,1369.7 238.9,1357.4 226.6,1345.0 214.4,1332.2 202.5,1319.3 190.8,1306.2 179.4,1292.9 168.1,1279.4 157.1,1265.6 146.3,1251.7 135.8,1237.6 125.4,1223.3 115.4,1208.9 105.6,1194.2 96.0,1179.4 86.7,1164.5 77.6,1149.3 68.8,1134.1 60.3,1118.6 52.0,1103.0 44.0,1087.3 36.2,1071.5 28.8,1055.5 21.6,1039.4 14.6,1023.2 8.0,1006.9 1.6,990.5 -4.4,973.9 -10.2,957.3 -15.7,940.6 -21.0,923.8 -25.9,906.9 -30.5,889.9 -34.9,872.9 -38.9,855.7 -42.7,838.5 -46.1,821.3 -49.3,804.0 -52.1,786.6 -54.7,769.2 -56.9,751.8 -58.9,734.3 -60.5,716.8 -61.9,699.2 -62.9,681.7 -63.6,664.1 -64.1,646.6 -64.2,629.0 -64.0,611.4 -63.5,593.9 -62.7,576.3 -61.6,558.8 -60.2,541.3 -58.4,523.9 -56.4,506.4 -54.1,489.1 -51.4,471.7 -48.5,454.4 -45.2,437.2 -41.7,420.0 -37.8,403.0 -33.6,385.9 -29.2,369.0 -24.4,352.1 -19.4,335.4 -14.0,318.7 -8.4,302.1 -2.4,285.7 3.8,269.3 10.3,253.1 17.1,237.0 24.2,221.0 31.6,205.1 39.3,189.4 47.2,173.8 55.5,158.3 64.0,143.0 72.7,127.9 81.8,112.9 91.1,98.1 100.7,83.4 110.5,69.0 120.6,54.7 130.9,40.5 141.5,26.6 152.4,12.9 163.5,-0.7 174.8,-14.1 186.4,-27.2 198.2,-40.2 210.3,-52.9 222.6,-65.4 235.1,-77.7 247.8,-89.8 260.8,-101.6 273.9,-113.3 287.3,-124.7 300.9,-135.8 314.6,-146.7 328.6,-157.4 342.8,-167.9 357.1,-178.0 371.7,-188.0 386.4,-197.6 401.3,-207.1 416.3,-216.2 431.6,-225.1 447.0,-233.7 462.5,-242.1 478.2,-250.2 494.0,-258.0 510.0,-265.5 526.1,-272.8 542.4,-279.8 558.8,-286.5 575.3,-292.9 591.9,-299.0 608.6,-304.8 625.5,-310.4 642.4,-315.6 659.4,-320.6 676.5,-325.3 693.7,-329.6 711.0,-333.7 728.4,-337.5 745.8,-341.0 763.3,-344.1 780.8,-347.0 798.4,-349.6 816.0,-351.8 833.7,-353.8 851.4,-355.5 869.1,-356.8 886.9,-357.9 904.7,-358.6 922.5,-359.1 940.3,-359.2 958.1,-359.0 975.9,-358.6 993.6,-357.8 1011.4,-356.7 1029.1,-355.3 1046.9,-353.6 1064.5,-351.7 1082.2,-349.4 1099.8,-346.8 1117.3,-343.9 1134.8,-340.7 1152.3,-337.2 1169.6,-333.4 1186.9,-329.3 1204.2,-324.9 1221.3,-320.3 1238.3,-315.3 1255.3,-310.0 1272.2,-304.5 1288.9,-298.7 1305.6,-292.5 1322.1,-286.1 1338.5,-279.4 1354.8,-272.5 1370.9,-265.2 1386.9,-257.7 1402.8,-250.0 1418.6,-241.9 1434.1,-233.6 1449.6,-225.0 1464.8,-216.1 1479.9,-207.0 1494.9,-197.7 1509.6,-188.0 1524.2,-178.2 1538.6,-168.1 1552.8,-157.7 1566.8,-147.1 1580.7,-136.3 1594.3,-125.2 1607.7,-113.9 1620.9,-102.3 1633.9,-90.6 1646.7,-78.6 1659.3,-66.4 1671.6,-54.0 1683.7,-41.4 1695.6,-28.5 1707.2,-15.5 1718.6,-2.3 1729.8,11.1 1740.7,24.8 1751.4,38.6 1761.8,52.5 1772.0,66.7 1781.9,81.0 1791.5,95.5 1800.9,110.2 1810.0,125.0 1818.8,140.0 1827.4,155.1 1835.7,170.4 1843.7,185.8 1851.4,201.4 1858.9,217.0 1866.0,232.9 1872.9,248.8 1879.5,264.8 1885.8,281.0 1891.8,297.3 1897.6,313.7 1903.0,330.2 1908.1,346.7 1913.0,363.4 1917.5,380.1 1921.7,397.0 1925.7,413.9 1929.3,430.8 1932.6,447.9 1935.6,464.9 1938.4,482.1 1940.8,499.3 1942.9,516.5 1944.7,533.8 1946.2,551.1 1947.4,568.4 1948.3,585.8 1948.8,603.1 1949.1,620.5 1949.1,637.9"/><polyline points="2016.2,637.6 2015.8,656.1 2015.1,674.7 2014.0,693.2 2012.7,711.7 2011.0,730.2 2009.0,748.7 2006.6,767.1 2004.0,785.5 2001.0,803.9 1997.7,822.2 1994.1,840.4 1990.2,858.6 1985.9,876.7 1981.3,894.8 1976.5,912.8 1971.3,930.7 1965.8,948.5 1959.9,966.2 1953.8,983.8 1947.4,1001.4 1940.7,1018.8 1933.7,1036.1 1926.4,1053.2 1918.7,1070.3 1910.8,1087.2 1902.6,1104.0 1894.2,1120.7 1885.4,1137.2 1876.3,1153.6 1867.0,1169.8 1857.4,1185.8 1847.5,1201.8 1837.4,1217.6 1827.0,1233.2 1816.3,1248.7 1805.4,1263.9 1794.2,1279.0 1782.8,1293.9 1771.1,1308.6 1759.1,1323.1 1746.9,1337.4 1734.5,1351.5 1721.9,1365.4 1709.0,1379.0 1695.9,1392.5 1682.5,1405.7 1669.0,1418.7 1655.2,1431.4 1641.3,1443.9 1627.1,1456.2 1612.7,1468.2 1598.1,1480.0 1583.3,1491.5 1568.4,1502.8 1553.2,1513.8 1537.9,1524.5 1522.4,1535.0 1506.7,1545.2 1490.9,1555.1 1474.9,1564.8 1458.7,1574.1 1442.4,1583.2 1426.0,1592.0 1409.4,1600.6 1392.7,1608.8 1375.8,1616.7 1358.8,1624.4 1341.7,1631.7 1324.5,1638.7 1307.1,1645.5 1289.7,1651.9 1272.1,1658.0 1254.5,1663.9 1236.8,1669.4 1218.9,1674.5 1201.0,1679.4 1183.1,1684.0 1165.0,1688.2 1146.9,1692.1 1128.7,1695.8 1110.5,1699.0 1092.2,1702.0 1073.9,1704.6 1055.5,1706.9 1037.1,1708.9 1018.7,1710.6 1000.3,1711.9 981.8,1712.9 963.4,1713.6 944.9,1713.9 926.4,1714.0 907.9,1713.6 889.5,1713.0 871.0,1712.0 852.6,1710.7 834.2,1709.1 815.8,1707.2 797.5,1704.9 779.2,1702.3 761.0,1699.4 742.8,1696.1 724.7,1692.5 706.6,1688.6 688.6,1684.4 670.7,1679.9 652.8,1675.0 635.1,1669.9 617.4,1664.4 599.8,1658.6 582.3,1652.4 565.0,1646.0 547.7,1639.3 530.6,1632.2 513.6,1624.9 496.7,1617.2 479.9,1609.3 463.3,1601.0 446.8,1592.5 430.4,1583.6 414.2,1574.5 398.2,1565.1 382.3,1555.4 366.6,1545.4 351.0,1535.2 335.7,1524.6 320.5,1513.8 305.5,1502.7 290.6,1491.4 276.0,1479.8 261.6,1467.9 247.3,1455.8 233.3,1443.5 219.5,1430.9 205.9,1418.0 192.5,1404.9 179.3,1391.6 166.4,1378.0 153.7,1364.3 141.2,1350.3 128.9,1336.0 116.9,1321.6 105.2,1307.0 93.7,1292.1 82.4,1277.1 71.4,1261.8 60.7,1246.4 50.2,1230.8 40.0,1215.0 30.0,1199.0 20.4,1182.9 11.0,1166.6 1.8,1150.2 -7.0,1133.7 -15.6,1117.0 -23.8,1100.1 -31.8,1083.1 -39.5,1066.0 -46.9,1048.7 -54.0,1031.3 -60.8,1013.8 -67.3,996.2 -73.5,978.4 -79.4,960.6 -84.9,942.7 -90.2,924.6 -95.2,906.5 -99.8,888.3 -104.2,870.0 -108.2,851.7 -111.9,833.3 -115.3,814.8 -118.3,796.3 -121.1,777.7 -123.5,759.1 -125.6,740.4 -127.3,721.8 -128.8,703.1 -129.9,684.3 -130.7,665.6 -131.2,646.9 -131.3,628.1 -131.1,609.4 -130.6,590.6 -129.8,571.9 -128.6,553.2 -127.1,534.6 -125.3,515.9 -123.1,497.3 -120.6,478.8 -117.8,460.3 -114.7,441.8 -111.3,423.5 -107.5,405.2 -103.4,386.9 -99.0,368.8 -94.2,350.7 -89.2,332.7 -83.8,314.8 -78.1,297.0 -72.1,279.3 -65.7,261.8 -59.1,244.3 -52.2,227.0 -44.9,209.8 -37.3,192.7 -29.5,175.8 -21.3,159.0 -12.8,142.4 -4.1,125.9 5.0,109.6 14.3,93.4 24.0,77.5 33.9,61.6 44.1,46.0 54.6,30.6 65.3,15.3 76.4,0.2 87.7,-14.6 99.3,-29.3 111.1,-43.7 123.2,-58.0 135.5,-72.0 148.2,-85.8 161.0,-99.4 174.1,-112.8 187.4,-125.9 201.0,-138.8 214.8,-151.4 228.9,-163.8 243.1,-176.0 257.6,-187.9 272.3,-199.5 287.2,-210.9 302.3,-222.0 317.7,-232.9 333.2,-243.5 348.9,-253.8 364.8,-263.8 380.8,-273.6 397.1,-283.1 413.5,-292.3 430.1,-301.2 446.9,-309.8 463.8,-318.1 480.8,-326.2 498.0,-333.9 515.4,-341.4 532.9,-348.5 550.5,-355.3 568.2,-361.9 586.1,-368.1 604.0,-374.0 622.1,-379.6 640.3,-384.9 658.6,-389.8 676.9,-394.5 695.4,-398.8 713.9,-402.9 732.5,-406.6 751.1,-409.9 769.9,-413.0 788.6,-415.7 807.5,-418.2 826.3,-420.3 845.2,-422.0 864.2,-423.5 883.1,-424.6 902.1,-425.4 921.1,-425.8 940.1,-426.0 959.1,-425.8 978.1,-425.3 997.1,-424.5 1016.1,-423.3 1035.0,-421.8 1053.9,-420.0 1072.8,-417.9 1091.6,-415.4 1110.4,-412.6 1129.2,-409.6 1147.8,-406.1 1166.5,-402.4 1185.0,-398.4 1203.5,-394.0 1221.8,-389.3 1240.1,-384.3 1258.3,-379.0 1276.4,-373.4 1294.4,-367.5 1312.3,-361.3 1330.1,-354.7 1347.7,-347.9 1365.2,-340.8 1382.6,-333.3 1399.8,-325.6 1416.9,-317.6 1433.9,-309.3 1450.7,-300.7 1467.3,-291.8 1483.8,-282.6 1500.1,-273.2 1516.2,-263.5 1532.1,-253.5 1547.9,-243.2 1563.4,-232.7 1578.8,-221.9 1594.0,-210.8 1608.9,-199.5 1623.7,-188.0 1638.2,-176.2 1652.5,-164.1 1666.6,-151.8 1680.5,-139.2 1694.1,-126.5 1707.5,-113.5 1720.7,-100.2 1733.6,-86.7 1746.3,-73.1 1758.7,-59.2 1770.8,-45.1 1782.7,-30.7 1794.4,-16.2 1805.8,-1.5 1816.9,13.4 1827.7,28.5 1838.2,43.8 1848.5,59.2 1858.5,74.9 1868.2,90.7 1877.6,106.7 1886.8,122.8 1895.6,139.1 1904.1,155.5 1912.4,172.1 1920.3,188.8 1928.0,205.7 1935.3,222.7 1942.3,239.8 1949.0,257.1 1955.4,274.4 1961.5,291.9 1967.3,309.5 1972.8,327.1 1977.9,344.9 1982.7,362.8 1987.2,380.7 1991.4,398.7 1995.3,416.8 1998.8,435.0 2002.0,453.2 2004.9,471.5 2007.5,489.8 2009.7,508.2 2011.6,526.6 2013.2,545.0 2014.4,563.5 2015.4,582.0 2016.0,600.5 2016.2,619.1 2016.2,637.6"/><path d="M941.6 231.6L941.6 258.7M956.0 231.6L955.5 246.7M970.5 231.6L969.4 246.6M985.0 231.6L983.4 246.5M999.6 231.5L997.5 246.4M1014.4 231.5L1009.7 258.2M1029.3 231.5L1026.2 246.2M1044.5 231.5L1040.9 246.1M1059.9 231.5L1055.8 245.9M1075.7 231.4L1071.0 245.8M1091.8 231.4L1082.5 256.9M1108.3 231.4L1102.7 245.4M1125.3 231.4L1119.2 245.2M1142.8 231.4L1136.2 244.9M1161.0 231.4L1153.9 244.7M1179.8 231.4L1166.2 254.9M1199.4 231.4L1191.4 244.1M1219.8 231.4L1211.4 243.8M1241.2 231.4L1232.4 243.5M1263.8 231.4L1254.5 243.2M1287.6 231.3L1270.1 252.1M1312.8 231.3L1302.7 242.5M1339.7 231.3L1329.2 242.1M1368.4 231.3L1357.6 241.8M1399.3 231.3L1388.1 241.4M1432.7 231.3L1411.9 248.7M1469.0 231.2L1457.1 240.5M1508.7 231.2L1496.4 240.1M1552.3 231.2L1539.8 239.6M1600.7 231.1L1587.9 239.1M1654.9 231.1L1631.3 244.6M1716.0 231.0L1702.6 238.0M1785.7 230.9L1772.1 237.5M1866.1 230.8L1852.3 236.9M1866.3 268.3L1852.3 273.9M1866.0 305.0L1840.4 314.2M1865.6 340.7L1851.3 345.4M1865.3 375.7L1850.8 379.8M1865.0 409.9L1850.4 413.6M1864.7 443.6L1849.9 446.8M1864.4 476.8L1837.7 481.6M1864.1 509.5L1849.1 511.7M1863.7 542.0L1848.8 543.7M1863.4 574.2L1848.4 575.4M1863.1 606.3L1848.1 606.9M1862.8 638.3L1835.8 638.5M1862.5 670.2L1847.5 669.8M1862.2 702.3L1847.2 701.4M1861.8 734.5L1847.0 733.1M1861.5 767.0L1846.7 765.0M1861.2 799.8L1834.7 795.4M1860.8 832.9L1846.2 830.0M1860.5 866.6L1846.0 863.2M1860.1 900.9L1845.8 896.9M1859.8 935.8L1845.6 931.4M1859.4 971.6L1834.2 962.7M1859.0 1008.3L1845.2 1002.8M1835.4 1035.9L1821.8 1030.0M1757.8 1037.0L1744.5 1030.6M1690.6 1037.9L1677.4 1031.1M1631.6 1038.7L1608.4 1025.5M1579.4 1039.4L1566.8 1031.6M1532.6 1040.0L1520.3 1031.8M1490.5 1040.5L1478.5 1031.9M1452.3 1041.0L1440.5 1031.9M1417.3 1041.4L1396.7 1024.3M1385.1 1041.8L1374.0 1031.9M1355.2 1042.2L1344.5 1031.8M1327.5 1042.5L1317.2 1031.8M1301.6 1042.8L1291.6 1031.7M1277.2 1043.0L1260.0 1022.5M1254.3 1043.3L1245.1 1031.5M1232.5 1043.5L1223.8 1031.5M1211.8 1043.8L1203.5 1031.4M1192.1 1044.0L1184.2 1031.3M1173.2 1044.2L1159.8 1020.8M1155.1 1044.3L1148.1 1031.1M1137.6 1044.5L1131.0 1031.0M1120.7 1044.7L1114.6 1031.0M1104.3 1044.8L1098.7 1030.9M1088.3 1045.0L1079.1 1019.6M1072.8 1045.1L1068.2 1030.8M1057.6 1045.3L1053.5 1030.8M1042.7 1045.4L1039.1 1030.8M1028.1 1045.5L1024.9 1030.8M1013.6 1045.6L1008.9 1019.0M999.4 1045.7L997.3 1030.8M985.3 1045.8L983.7 1030.9M971.2 1045.9L970.2 1030.9M957.3 1046.0L956.8 1031.0M943.4 1046.1L943.3 1019.0M929.5 1046.2L930.0 1031.2M915.5 1046.3L916.5 1031.3M901.5 1046.4L903.0 1031.4M887.4 1046.4L889.4 1031.5M873.2 1046.5L877.7 1019.8M858.7 1046.6L861.8 1031.8M844.1 1046.7L847.7 1032.0M829.2 1046.7L833.3 1032.2M814.0 1046.8L818.6 1032.4M798.5 1046.8L807.5 1021.3M782.5 1046.9L788.0 1032.9M766.1 1047.0L772.1 1033.2M749.2 1047.0L755.7 1033.4M731.7 1047.1L738.7 1033.7M713.6 1047.1L726.9 1023.5M694.7 1047.2L702.5 1034.3M674.9 1047.2L683.2 1034.7M654.3 1047.2L663.0 1035.0M632.5 1047.3L641.6 1035.4M609.5 1047.3L626.7 1026.5M585.2 1047.4L595.1 1036.1M559.3 1047.4L569.6 1036.5M531.5 1047.4L542.2 1036.9M501.7 1047.5L512.7 1037.4M469.5 1047.5L490.0 1030.0M434.5 1047.5L446.2 1038.2M396.3 1047.6L408.2 1038.7M354.1 1047.6L366.4 1039.1M307.4 1047.6L320.0 1039.6M255.2 1047.6L278.3 1034.0M196.2 1047.5L209.3 1040.5M129.0 1047.5L142.3 1040.9M51.4 1047.4L64.9 1041.2M18.2 1023.6L32.0 1017.9M17.7 986.2L42.8 976.9M17.1 949.7L31.3 945.1M16.6 914.1L30.9 909.9M16.1 879.1L30.5 875.5M15.6 844.8L30.2 841.6M15.1 810.9L41.5 806.2M14.6 777.5L29.4 775.4M14.1 744.4L29.0 742.8M13.6 711.6L28.6 710.5M13.1 678.9L28.1 678.3M12.7 646.2L39.7 646.2M12.2 613.6L27.2 614.1M11.7 580.9L26.7 581.9M11.3 548.0L26.2 549.6M10.8 514.9L25.7 517.0M10.3 481.5L37.1 486.2M9.9 447.7L24.6 450.8M9.4 413.3L24.0 417.0M8.9 378.4L23.4 382.5M8.4 342.7L22.8 347.4M7.9 306.3L33.5 315.5M7.4 268.9L21.5 274.5M17.0 234.9L30.9 241.0M97.5 234.6L111.1 241.2M167.2 234.4L180.6 241.5M228.3 234.2L251.9 247.7M282.4 234.0L295.3 242.0M330.9 233.9L343.4 242.3M374.5 233.7L386.8 242.5M414.2 233.6L426.1 242.8M450.5 233.4L471.4 250.8M483.8 233.3L495.1 243.4M514.7 233.2L525.7 243.6M543.5 233.1L554.0 243.9M570.3 233.0L580.5 244.2M595.6 232.9L613.2 253.6M619.4 232.8L628.7 244.6M641.9 232.7L650.9 244.9M663.4 232.6L671.9 245.1M683.8 232.5L691.9 245.3M703.4 232.4L717.1 255.9M722.2 232.4L729.3 245.6M740.3 232.3L747.0 245.8M757.9 232.2L764.1 246.0M774.8 232.2L780.6 246.1M791.4 232.1L800.8 257.6M807.5 232.0L812.2 246.3M823.2 232.0L827.4 246.4M838.7 231.9L842.4 246.5M853.8 231.9L857.0 246.6M868.8 231.8L873.6 258.5M883.6 231.8L885.7 246.7M898.2 231.7L899.8 246.7M912.7 231.7L913.8 246.7M927.2 231.7L927.7 246.7" stroke-width="2.5" stroke="#62b550"/></g><line x1="941.5" y1="236" x2="941.5" y2="300" stroke="#f2dcae" stroke-width="3"/><g fill="#e8d18e" clip-path="url(#rc)"><polygon points="628,291 661,264 671,266 668,275 646,291"/><polygon points="684,291 700,266 719,257 741,263 722,281 712,291"/><polygon points="756,269 779,252 801,242 816,240 818,247 804,256 792,258 770,268"/><polygon points="789,291 811,273 835,260 859,257 881,259 865,271 845,278 835,291"/><polygon points="847,291 855,286 889,282 899,286 896,291"/><polygon points="1181,271 1188,269 1206,283 1208,289 1200,290 1186,279"/><polygon points="148,702 160,702 163,742 152,742"/><polygon points="183,736 194,736 200,790 192,792 186,770"/><polygon points="299,705 309,705 312,740 303,740"/><polygon points="343,612 352,612 355,643 345,643"/><polygon points="851,832 866,831 877,840 874,852 860,855 851,846"/><polygon points="849,869 855,866 861,871 856,877 850,875"/><polygon points="1040,850 1055,840 1068,845 1071,857 1060,866 1047,870 1038,860"/><polygon points="1121,907 1134,892 1147,887 1150,895 1138,906 1125,911"/><polygon points="1002,838 1014,831 1020,834 1012,842"/><polygon points="684,934 700,938 708,945 700,949 688,943"/><polygon points="929,966 963,965 966,973 932,976"/><polygon points="908,988 930,986 932,993 940,997 938,1007 912,1006 907,998"/><polygon points="896,1014 925,1013 940,1020 955,1024 956,1034 920,1034 896,1022"/><polygon points="777,1038 795,1033 812,1040 812,1047 780,1047"/></g><g fill="#8ad8e6" clip-path="url(#rc)"><rect x="723" y="254" width="8" height="6"/><rect x="756" y="266" width="8" height="5"/><rect x="795" y="255" width="8" height="5"/><rect x="877" y="257" width="7" height="5"/><rect x="896" y="284" width="7" height="5"/><rect x="148" y="701" width="9" height="7"/><rect x="183" y="734" width="9" height="6"/><rect x="192" y="786" width="8" height="6"/><rect x="299" y="704" width="10" height="5"/><rect x="343" y="598" width="8" height="5"/><rect x="345" y="622" width="8" height="6"/><rect x="1026" y="856" width="9" height="9"/><rect x="1030" y="866" width="6" height="6"/><rect x="682" y="931" width="7" height="5"/><rect x="649" y="1003" width="6" height="6"/><rect x="657" y="1010" width="7" height="8"/><rect x="1003" y="832" width="6" height="5"/><rect x="1605" y="600" width="5" height="5"/><rect x="202" y="942" width="5" height="5"/><rect x="490" y="938" width="4" height="4"/></g><defs><filter id="bl"><feGaussianBlur stdDeviation="2.5"/></filter></defs><ellipse cx="205" cy="527" rx="14" ry="5" fill="#5a4ac8" opacity="0.75" filter="url(#bl)"/><ellipse cx="303" cy="576" rx="10" ry="4" fill="#4a3aa8" opacity="0.5" filter="url(#bl)"/></svg>
<div class="abs" style="left:383px;top:1065px;width:1px;height:55px;background:#2a323a"></div><div class="abs" style="left:384px;top:1065px;width:3px;height:55px;background:#d8dcde"></div>
<div class="abs" style="left:757px;top:1065px;width:1px;height:55px;background:#2a323a"></div><div class="abs" style="left:758px;top:1065px;width:3px;height:55px;background:#d8dcde"></div>
<div class="abs" style="left:1129px;top:1060px;width:1px;height:55px;background:#2a323a"></div><div class="abs" style="left:1130px;top:1060px;width:3px;height:55px;background:#d8dcde"></div>
<div class="abs" style="left:1501px;top:1056px;width:1px;height:55px;background:#2a323a"></div><div class="abs" style="left:1502px;top:1056px;width:3px;height:55px;background:#d8dcde"></div>
<div class="abs" style="left:1269px;top:86px;width:11px;height:2px;background:#6a6d70"></div>
<div class="abs" style="left:1285px;top:86px;width:11px;height:2px;background:#6a6d70"></div>
<div class="abs" style="left:1301px;top:86px;width:11px;height:2px;background:#6a6d70"></div>
<!-- menu -->
<div class="abs" style="left:405px;top:294px;width:1061px;height:534px;background:#f3f3f3;clip-path:polygon(0 0,100% 0,100% 529px,0 534px)"></div>
<div class="abs" style="left:411px;top:299px;width:1049px;height:42px;background:#6c7488"></div>
<div class="abs" style="left:414px;top:347px;width:1046px;height:42px;background:linear-gradient(90deg,#b3bbca,#bcc4d3)"></div>
<div class="abs" style="left:414px;top:452px;width:1041px;height:2px;background:#5a5a5a"></div>
<div class="abs" style="left:418px;top:704px;width:1037px;height:2px;background:#5a5a5a"></div>
<!-- popup -->
<div class="abs" style="left:1358px;top:345px;width:509px;height:61px;background:#1a2028"></div>
<div class="abs" style="left:1362px;top:348px;width:503px;height:55px;background:#f0f4f4"></div>
<div class="abs" style="left:1365px;top:353px;width:492px;height:42px;background:#3bb9d0"></div>
<div class="t" style="left:24.4px;top:38.1px;font-size:22.71px;letter-spacing:1.49px;font-weight:normal;color:#7d7f80;transform:scaleX(1.1);transform-origin:0 0">Csr</div><div class="t" style="left:98.8px;top:35.3px;font-size:30.43px;letter-spacing:0.42px;font-weight:normal;color:#3a3d3f;transform:scaleX(1.22);transform-origin:0 0">26°14'.068N</div><div class="t" style="left:370.4px;top:35.3px;font-size:30.43px;letter-spacing:0.34px;font-weight:normal;color:#3a3d3f;transform:scaleX(1.22);transform-origin:0 0">000</div><div class="t" style="left:447.0px;top:38.1px;font-size:22.71px;letter-spacing:3.62px;font-weight:normal;color:#6a6d70">°T</div><div class="t" style="left:23.9px;top:116.2px;font-size:22.86px;letter-spacing:-0.79px;font-weight:normal;color:#7d7f80;transform:scaleX(1.1);transform-origin:0 0">Pos</div><div class="t" style="left:69.6px;top:116.5px;font-size:30.00px;letter-spacing:0.37px;font-weight:normal;color:#3a3d3f;transform:scaleX(1.22);transform-origin:0 0">080°08'.268W</div><div class="t" style="left:415.0px;top:116.5px;font-size:30.00px;letter-spacing:0.00px;font-weight:normal;color:#3a3d3f">0</div><div class="t" style="left:448.0px;top:119.4px;font-size:22.86px;letter-spacing:1.15px;font-weight:normal;color:#6a6d70">ft</div><div class="t" style="left:515.6px;top:33.8px;font-size:28.14px;letter-spacing:-2.92px;font-weight:normal;color:#7d7f80;transform:scaleX(1.1);transform-origin:0 0">Ves</div><div class="t" style="left:595.8px;top:34.2px;font-size:31.57px;letter-spacing:-0.31px;font-weight:normal;color:#3a3d3f;transform:scaleX(1.22);transform-origin:0 0">26°14'.070N</div><div class="t" style="left:517.9px;top:115.1px;font-size:23.43px;letter-spacing:-0.36px;font-weight:normal;color:#7d7f80;transform:scaleX(1.1);transform-origin:0 0">Pos</div><div class="t" style="left:564.8px;top:115.3px;font-size:31.00px;letter-spacing:-0.11px;font-weight:normal;color:#3a3d3f;transform:scaleX(1.22);transform-origin:0 0">080°08'.267W</div><div class="t" style="left:835.0px;top:30.0px;font-size:30.57px;letter-spacing:-2.95px;font-weight:normal;color:#8a8c8e;transform:scaleX(1.05);transform-origin:0 0">COG</div><div class="t" style="left:948.9px;top:30.6px;font-size:35.71px;letter-spacing:-0.98px;font-weight:normal;color:#3a3d3f;transform:scaleX(1.2);transform-origin:0 0">174</div><div class="t" style="left:1031.0px;top:33.3px;font-size:31.43px;letter-spacing:-0.86px;font-weight:normal;color:#6a6d70">°T</div><div class="t" style="left:836.6px;top:110.3px;font-size:31.14px;letter-spacing:-3.27px;font-weight:normal;color:#8a8c8e;transform:scaleX(1.05);transform-origin:0 0">SOG</div><div class="t" style="left:959.9px;top:113.9px;font-size:31.86px;letter-spacing:2.81px;font-weight:normal;color:#3a3d3f;transform:scaleX(1.1);transform-origin:0 0">0.1</div><div class="t" style="left:1030.0px;top:113.9px;font-size:31.86px;letter-spacing:5.08px;font-weight:normal;color:#6a6d70">kt</div><div class="t" style="left:1110.1px;top:70.2px;font-size:29.71px;letter-spacing:0.13px;font-weight:normal;color:#5f6468;transform:scaleX(1.1);transform-origin:0 0">Heading</div><div class="t" style="left:1328.7px;top:74.0px;font-size:29.71px;letter-spacing:0.42px;font-weight:normal;color:#6a6d70">°T</div><div class="t" style="left:12.4px;top:194.1px;font-size:32.86px;letter-spacing:1.83px;font-weight:bold;color:#f2efe6">1½nm</div><div class="t" style="left:327.3px;top:194.1px;font-size:32.86px;letter-spacing:-1.20px;font-weight:bold;color:#f2efe6;transform:scaleX(1.2);transform-origin:0 0">20304</div><div class="t" style="left:655.8px;top:194.0px;font-size:30.00px;letter-spacing:0.29px;font-weight:bold;color:#f2efe6;transform:scaleX(1.1);transform-origin:0 0">Head-Up</div><div class="t" style="left:1027.9px;top:194.1px;font-size:29.29px;letter-spacing:0.43px;font-weight:bold;color:#f2efe6;transform:scaleX(1.08);transform-origin:0 0">Relative Motion</div><div class="t" style="left:1488.8px;top:193.5px;font-size:30.00px;letter-spacing:-1.30px;font-weight:bold;color:#f2efe6;transform:scaleX(1.1);transform-origin:0 0">Rings</div><div class="t" style="left:1790.0px;top:193.5px;font-size:30.00px;letter-spacing:0.00px;font-weight:bold;color:#f2efe6">¼</div><div class="t" style="left:1819.0px;top:192.2px;font-size:31.00px;letter-spacing:1.06px;font-weight:bold;color:#f2efe6">nm</div><div class="t" style="left:767.4px;top:301.2px;font-size:32.29px;letter-spacing:2.07px;font-weight:bold;color:#f4f4f6;transform:scaleX(1.08);transform-origin:0 0">Radar Setup Menu</div><div class="t" style="left:418.6px;top:353.4px;font-size:29.29px;letter-spacing:1.47px;font-weight:normal;color:#3b3f46">Select Scanner</div><div class="t" style="left:419.4px;top:395.5px;font-size:29.71px;letter-spacing:1.52px;font-weight:normal;color:#6c6e72">Scanner Setup...</div><div class="t" style="left:419.4px;top:481.0px;font-size:29.43px;letter-spacing:1.78px;font-weight:normal;color:#dddddd">Colour Palette</div><div class="t" style="left:420.0px;top:524.5px;font-size:28.43px;letter-spacing:1.39px;font-weight:normal;color:#66696d">EBL Reference</div><div class="t" style="left:906.7px;top:525.0px;font-size:26.43px;letter-spacing:2.94px;font-weight:normal;color:#66696d">Relative</div><div class="t" style="left:425.0px;top:566.7px;font-size:28.57px;letter-spacing:1.66px;font-weight:normal;color:#66696d">Timed Transmit</div><div class="t" style="left:908.4px;top:565.2px;font-size:28.57px;letter-spacing:-1.73px;font-weight:normal;color:#66696d">OFF</div><div class="t" style="left:425.2px;top:607.6px;font-size:29.29px;letter-spacing:1.36px;font-weight:normal;color:#66696d">Transmit Period</div><div class="t" style="left:908.4px;top:607.5px;font-size:28.57px;letter-spacing:0.71px;font-weight:normal;color:#66696d">20 SCANS</div><div class="t" style="left:422.6px;top:650.7px;font-size:28.57px;letter-spacing:2.11px;font-weight:normal;color:#66696d">Standby Period</div><div class="t" style="left:908.4px;top:649.3px;font-size:28.57px;letter-spacing:1.22px;font-weight:normal;color:#66696d">5 MINS</div><div class="t" style="left:421.5px;top:736.3px;font-size:28.29px;letter-spacing:2.19px;font-weight:normal;color:#66696d">Bearing Alignment...</div><div class="t" style="left:421.5px;top:776.8px;font-size:28.29px;letter-spacing:2.17px;font-weight:normal;color:#66696d">Radar Advanced Setup...</div><div class="t" style="left:1386.4px;top:354.6px;font-size:33.43px;letter-spacing:-0.57px;font-weight:normal;color:#1f4a60">4kW Radome E92129 0320304</div>

<svg class="abs" style="left:0;top:0" width="1881" height="200" viewBox="0 0 1881 200">
<g>
 <!-- globe -->
 <circle cx="1628" cy="82" r="10" fill="#1e9ad8"/>
 <ellipse cx="1627" cy="84" rx="6" ry="6.5" fill="#2e9a48"/>
 <path d="M1616 92 Q1626 101 1640 90 Q1645 84 1644 78" stroke="#0f3c96" stroke-width="4" fill="none"/>
 <path d="M1619 95 Q1630 98 1638 92" stroke="#0a2a70" stroke-width="2.5" fill="none"/>
 <path d="M1613 86 Q1614 70 1632 66" stroke="#eef0ee" stroke-width="5" fill="none"/>
 <path d="M1633 66 Q1637 68 1638 71" stroke="#2a9a50" stroke-width="2.5" fill="none"/>
 <!-- satellite -->
 <path d="M1640 75 L1654 61" stroke="#102a60" stroke-width="9"/>
 <path d="M1639.5 74 L1653.5 60" stroke="#e98a80" stroke-width="7"/>
 <path d="M1652 90 L1668 75" stroke="#102a60" stroke-width="9"/>
 <path d="M1651.5 89 L1667.5 74" stroke="#e98a80" stroke-width="7"/>
 <ellipse cx="1652" cy="75" rx="5" ry="3.5" fill="#f2f2f2" transform="rotate(-30 1652 75)"/>
 <!-- FIX -->
 <text x="1619" y="115.5" font-family="Liberation Sans" font-weight="bold" font-size="21" fill="#0c2c6e" textLength="47" lengthAdjust="spacingAndGlyphs">FIX</text>
 <!-- AIS ship -->
 <polygon points="1693,37 1706,38 1716,42 1724,46 1716,52 1693,58" fill="#b8b8b8"/>
 <path d="M1693 36.5 L1706 37.5 L1716 41.5" stroke="#203050" stroke-width="1.3" fill="none"/>
 <line x1="1726" y1="46.5" x2="1762" y2="46" stroke="#a8a8a8" stroke-width="2"/>
 <path d="M1712 33 L1741 61.5 M1741 33 L1712 61.5" stroke="#fbd4d4" stroke-width="10" fill="none"/>
 <path d="M1712 33 L1741 61.5 M1741 33 L1712 61.5" stroke="#ec5a42" stroke-width="5" fill="none"/>
 <text x="1689" y="80" font-family="Liberation Sans" font-weight="bold" font-size="22" fill="#0c2c6e" textLength="74" lengthAdjust="spacingAndGlyphs">NOAIS</text>
 <!-- boat -->
 <polygon points="1689,116 1695,107.5 1736,102.5 1762,101 1765,104 1751,117.5" fill="#ebe6de"/>
 <polygon points="1706,93 1726,92.5 1734,101 1722,103 1710,103.5" fill="#ebe6de"/>
 <path d="M1710 96 L1728 95.5 M1712 99 L1731 98.5" stroke="#b8b4ae" stroke-width="1" fill="none"/>
 <path d="M1694 113.5 L1752 111" stroke="#c4c0b8" stroke-width="2.5" fill="none"/>
 <!-- fish -->
 <ellipse cx="1723" cy="143" rx="9" ry="4.5" fill="#b8b8b8"/>
 <polygon points="1731,143 1738,138 1738,148" fill="#b8b8b8"/>
 <!-- horn -->
 <polygon points="1790,38.5 1818,29 1829,28 1831,49.5 1819,50 1794,44.5" fill="#e6decd" stroke="#1a2840" stroke-width="1.6" stroke-linejoin="round"/>
 <path d="M1818 29.5 L1819 49.5" stroke="#9a9282" stroke-width="2"/>
 <path d="M1795 44 L1819 49" stroke="#7a7468" stroke-width="2"/>
 <path d="M1806 49 L1812 55" stroke="#1a2840" stroke-width="3"/>
 <path d="M1799 56 Q1811 51 1824 55 L1825 72 Q1820 79 1808 78 Q1798 77 1797 70 Z" fill="#e6decd" stroke="#1a2840" stroke-width="1.6"/>
 <path d="M1799 61 Q1811 58 1823 61 M1799 68 Q1811 65 1823 68 M1800 74 Q1811 72 1822 74" stroke="#6e685c" stroke-width="1.8" fill="none"/>
 <!-- pilot -->
 <g opacity="0.85">
 <circle cx="1803" cy="111" r="12" fill="none" stroke="#a87ad0" stroke-width="3.5"/>
 <path d="M1786 99 L1820 126 M1818 96 L1790 128 M1788 111 L1818 111 M1803 94 L1803 128" stroke="#c884c0" stroke-width="2.5"/>
 </g>
 <path d="M1808 98 L1836 128 M1836 98 L1808 128" stroke="#f6b8b0" stroke-width="8" fill="none"/>
 <path d="M1808 98 L1836 128 M1836 98 L1808 128" stroke="#ee5238" stroke-width="4" fill="none"/>
 <text x="1772" y="149.5" font-family="Liberation Sans" font-weight="bold" font-size="21" fill="#0c2c6e" textLength="69" lengthAdjust="spacingAndGlyphs">PILOT</text>
</g></svg>

<div class="abs" style="left:620px;top:50px;width:75px;height:45px;background:radial-gradient(ellipse at center,rgba(255,255,255,0.35),rgba(255,255,255,0) 70%)"></div>
</body></html>
